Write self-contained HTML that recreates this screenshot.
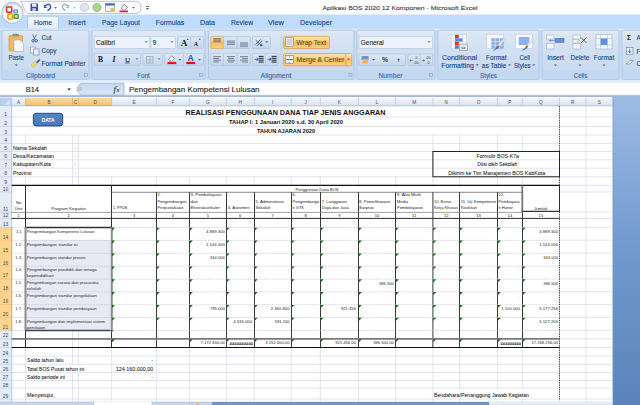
<!DOCTYPE html>
<html lang="id"><head><meta charset="utf-8"><title>Aplikasi BOS 2020 12 Komponen - Microsoft Excel</title>
<style>
html,body{margin:0;padding:0;background:#fff;overflow:hidden}
body{width:640px;height:405px;font-family:"Liberation Sans", sans-serif}
svg{display:block;font-family:"Liberation Sans", sans-serif}
text{white-space:pre}
</style></head><body>
<svg width="640" height="405" viewBox="0 0 640 405">
<defs>
<linearGradient id="gGroup" x1="0" y1="0" x2="0" y2="1"><stop offset="0" stop-color="#dfe9f6"/><stop offset="0.3" stop-color="#d3e1f3"/><stop offset="1" stop-color="#c6d9f0"/></linearGradient>
<linearGradient id="gTab" x1="0" y1="0" x2="0" y2="1"><stop offset="0" stop-color="#f2f7fd"/><stop offset="1" stop-color="#dfe9f6"/></linearGradient>
<linearGradient id="gOrange" x1="0" y1="0" x2="0" y2="1"><stop offset="0" stop-color="#fde4ad"/><stop offset="0.45" stop-color="#fdcf7c"/><stop offset="0.5" stop-color="#fbbd58"/><stop offset="1" stop-color="#fdd184"/></linearGradient>
<linearGradient id="gHdr" x1="0" y1="0" x2="0" y2="1"><stop offset="0" stop-color="#f4f7fc"/><stop offset="1" stop-color="#d9e3f1"/></linearGradient>
<linearGradient id="gHdrSel" x1="0" y1="0" x2="0" y2="1"><stop offset="0" stop-color="#f9dca4"/><stop offset="1" stop-color="#f4be6c"/></linearGradient>
<linearGradient id="gBlue" x1="0" y1="0" x2="0" y2="1"><stop offset="0" stop-color="#9dbbe4"/><stop offset="0.5" stop-color="#7099cf"/><stop offset="1" stop-color="#5a84bb"/></linearGradient>
<radialGradient id="gOrb" cx="0.5" cy="0.6" r="0.6"><stop offset="0" stop-color="#ffffff"/><stop offset="0.7" stop-color="#f4f6fa"/><stop offset="1" stop-color="#c3ccda"/></radialGradient>
<linearGradient id="gBtn" x1="0" y1="0" x2="0" y2="1"><stop offset="0" stop-color="#dce8f6"/><stop offset="1" stop-color="#c4d7ee"/></linearGradient>
<linearGradient id="gData" x1="0" y1="0" x2="0" y2="1"><stop offset="0" stop-color="#5585c2"/><stop offset="1" stop-color="#4878b6"/></linearGradient>
<linearGradient id="gPill" x1="0" y1="0" x2="0" y2="1"><stop offset="0" stop-color="#c3d6f0"/><stop offset="1" stop-color="#dde9f8"/></linearGradient>
</defs>
<rect x="0" y="0" width="640" height="14.5" fill="#ffffff" />
<rect x="0" y="14.5" width="640" height="14.5" fill="#bfdbff" />
<path d="M0 0 H22 Q24 8 28 14.5 H0 Z" fill="#ffffff"/>
<path d="M20.6 1.3 H135.5 Q141 1.3 141 7.4 Q141 13.5 135.5 13.5 H27.5 Q24.5 11.5 23.3 7 Q22.5 3 20.6 1.3 Z" fill="#f8fafd" stroke="#aeb6c6" stroke-width="0.8"/>
<text x="400" y="9.6" font-size="6.1" fill="#3b3b3b" text-anchor="middle" textLength="155" lengthAdjust="spacingAndGlyphs" stroke="#3b3b3b" stroke-width="0.1">Aplikasi BOS 2020 12 Komponen - Microsoft Excel</text>
<circle cx="12.5" cy="12.8" r="10.6" fill="url(#gOrb)" stroke="#9aa7ba" stroke-width="0.7"/>
<rect x="6.6" y="7" width="5.2" height="5.2" fill="#f7e9e2" stroke="#d9381e" stroke-width="1.5" rx="0.6" />
<rect x="14" y="10" width="3.4" height="3" fill="#e6eefb" stroke="#3f7ed8" stroke-width="1.1" rx="0.5" />
<rect x="7.9" y="14.1" width="4.6" height="4.8" fill="#fbf1dc" stroke="#f09a1a" stroke-width="1.5" rx="0.6" />
<rect x="14.2" y="14.6" width="4" height="3.6" fill="#e5f2dc" stroke="#4c9a2a" stroke-width="1.4" rx="0.5" />
<rect x="30.5" y="3.5" width="7.5" height="7.5" fill="#3a49b0" rx="0.6" />
<rect x="32" y="3.8" width="4.5" height="3" fill="#e8ecfa" />
<rect x="32.3" y="8.2" width="3.6" height="2.8" fill="#c5cbe9" />
<path d="M45 6 Q49 2.5 50.5 6 Q51 9 47.5 10.5" fill="none" stroke="#3c62c8" stroke-width="1.5"/><path d="M43.8 4.2 V8 H47.3 Z" fill="#3c62c8"/>
<path d="M54 7 h3 l-1.5 1.8 z" fill="#6b7686"/>
<path d="M68 6 Q64 2.5 62.5 6 Q62 9 65.5 10.5" fill="none" stroke="#a9b7d4" stroke-width="1.5"/><path d="M69.2 4.2 V8 H65.7 Z" fill="#a9b7d4"/>
<path d="M73 7 h3 l-1.5 1.8 z" fill="#b5bcc8"/>
<circle cx="84.5" cy="7.5" r="4.2" fill="#dfe3ea" stroke="#bcc3cf" stroke-width="0.6"/>
<circle cx="97" cy="7.5" r="4.2" fill="#a9d48c" stroke="#86b36b" stroke-width="0.6"/>
<rect x="105.5" y="3.5" width="9" height="8" fill="#eef2fa" stroke="#7c8fb5" stroke-width="0.6" />
<rect x="105.5" y="3.5" width="9" height="2" fill="#4a67b5" />
<rect x="110.5" y="8" width="4" height="3.5" fill="#e9c35a" />
<path d="M121 8.5 l3 -4.5 l3.5 3.5 l-3.2 2.8 z" fill="#eef1f6" stroke="#55617a" stroke-width="0.6"/>
<rect x="119.5" y="10.6" width="8.5" height="1.6" fill="#e0131b" />
<path d="M132 7 h3 l-1.5 1.8 z" fill="#6b7686"/>
<rect x="146" y="6.2" width="3" height="0.8" fill="#3d4f74" />
<path d="M146 8 h3 l-1.5 1.8 z" fill="#3d4f74"/>
<path d="M27.6 29.6 V18.5 Q27.6 16.2 30 16.2 H56.2 Q58.6 16.2 58.6 18.5 V29.6 Z" fill="url(#gTab)"/><path d="M27.6 29.3 V18.5 Q27.6 16.2 30 16.2 H56.2 Q58.6 16.2 58.6 18.5 V29.3" fill="none" stroke="#9fbbe0" stroke-width="0.7"/>
<text x="43" y="25.2" font-size="6.4" fill="#15428b" text-anchor="middle" textLength="18" lengthAdjust="spacingAndGlyphs" stroke="#15428b" stroke-width="0.1">Home</text>
<text x="77" y="25.2" font-size="6.4" fill="#15428b" text-anchor="middle" textLength="17.5" lengthAdjust="spacingAndGlyphs" stroke="#15428b" stroke-width="0.1">Insert</text>
<text x="121" y="25.2" font-size="6.4" fill="#15428b" text-anchor="middle" textLength="38" lengthAdjust="spacingAndGlyphs" stroke="#15428b" stroke-width="0.1">Page Layout</text>
<text x="170" y="25.2" font-size="6.4" fill="#15428b" text-anchor="middle" textLength="28.5" lengthAdjust="spacingAndGlyphs" stroke="#15428b" stroke-width="0.1">Formulas</text>
<text x="207.5" y="25.2" font-size="6.4" fill="#15428b" text-anchor="middle" textLength="15" lengthAdjust="spacingAndGlyphs" stroke="#15428b" stroke-width="0.1">Data</text>
<text x="242" y="25.2" font-size="6.4" fill="#15428b" text-anchor="middle" textLength="22" lengthAdjust="spacingAndGlyphs" stroke="#15428b" stroke-width="0.1">Review</text>
<text x="276" y="25.2" font-size="6.4" fill="#15428b" text-anchor="middle" textLength="16" lengthAdjust="spacingAndGlyphs" stroke="#15428b" stroke-width="0.1">View</text>
<text x="316" y="25.2" font-size="6.4" fill="#15428b" text-anchor="middle" textLength="32" lengthAdjust="spacingAndGlyphs" stroke="#15428b" stroke-width="0.1">Developer</text>
<rect x="0" y="29" width="640" height="52" fill="#c8dcf4" />
<rect x="0" y="28.6" width="640" height="1.6" fill="#dce8f7" />
<rect x="0" y="80.2" width="640" height="3" fill="#e4effb" />
<rect x="2" y="30.2" width="87" height="49.3" fill="url(#gGroup)" stroke="#a4bfe0" stroke-width="0.7" rx="1.8" />
<path d="M2.4 70.6 H88.6 V78 Q88.6 79.2 87.2 79.2 H3.8 Q2.4 79.2 2.4 78 Z" fill="#c1d8f0"/>
<rect x="92" y="30.2" width="113" height="49.3" fill="url(#gGroup)" stroke="#a4bfe0" stroke-width="0.7" rx="1.8" />
<path d="M92.4 70.6 H204.6 V78 Q204.6 79.2 203.2 79.2 H93.8 Q92.4 79.2 92.4 78 Z" fill="#c1d8f0"/>
<rect x="208.5" y="30.2" width="145.5" height="49.3" fill="url(#gGroup)" stroke="#a4bfe0" stroke-width="0.7" rx="1.8" />
<path d="M208.9 70.6 H353.6 V78 Q353.6 79.2 352.2 79.2 H210.3 Q208.9 79.2 208.9 78 Z" fill="#c1d8f0"/>
<rect x="357" y="30.2" width="78" height="49.3" fill="url(#gGroup)" stroke="#a4bfe0" stroke-width="0.7" rx="1.8" />
<path d="M357.4 70.6 H434.6 V78 Q434.6 79.2 433.2 79.2 H358.8 Q357.4 79.2 357.4 78 Z" fill="#c1d8f0"/>
<rect x="438" y="30.2" width="101" height="49.3" fill="url(#gGroup)" stroke="#a4bfe0" stroke-width="0.7" rx="1.8" />
<path d="M438.4 70.6 H538.6 V78 Q538.6 79.2 537.2 79.2 H439.8 Q438.4 79.2 438.4 78 Z" fill="#c1d8f0"/>
<rect x="542" y="30.2" width="77" height="49.3" fill="url(#gGroup)" stroke="#a4bfe0" stroke-width="0.7" rx="1.8" />
<path d="M542.4 70.6 H618.6 V78 Q618.6 79.2 617.2 79.2 H543.8 Q542.4 79.2 542.4 78 Z" fill="#c1d8f0"/>
<rect x="622" y="30.2" width="78" height="49.3" fill="url(#gGroup)" stroke="#a4bfe0" stroke-width="0.7" rx="1.8" />
<path d="M622.4 70.6 H699.6 V78 Q699.6 79.2 698.2 79.2 H623.8 Q622.4 79.2 622.4 78 Z" fill="#c1d8f0"/>
<text x="40.5" y="77.8" font-size="6.3" fill="#3a66a8" text-anchor="middle" textLength="29" lengthAdjust="spacingAndGlyphs" stroke="#3a66a8" stroke-width="0.1">Clipboard</text>
<text x="143.5" y="77.8" font-size="6.3" fill="#3a66a8" text-anchor="middle" textLength="12.5" lengthAdjust="spacingAndGlyphs" stroke="#3a66a8" stroke-width="0.1">Font</text>
<text x="276" y="77.8" font-size="6.3" fill="#3a66a8" text-anchor="middle" textLength="31" lengthAdjust="spacingAndGlyphs" stroke="#3a66a8" stroke-width="0.1">Alignment</text>
<text x="390.5" y="77.8" font-size="6.3" fill="#3a66a8" text-anchor="middle" textLength="24" lengthAdjust="spacingAndGlyphs" stroke="#3a66a8" stroke-width="0.1">Number</text>
<text x="488.5" y="77.8" font-size="6.3" fill="#3a66a8" text-anchor="middle" textLength="17" lengthAdjust="spacingAndGlyphs" stroke="#3a66a8" stroke-width="0.1">Styles</text>
<text x="580.5" y="77.8" font-size="6.3" fill="#3a66a8" text-anchor="middle" textLength="13.5" lengthAdjust="spacingAndGlyphs" stroke="#3a66a8" stroke-width="0.1">Cells</text>
<rect x="84.5" y="73.5" width="3" height="3" fill="none" stroke="#7f97bd" stroke-width="0.5" />
<rect x="199.5" y="73.5" width="3" height="3" fill="none" stroke="#7f97bd" stroke-width="0.5" />
<rect x="349" y="73.5" width="3" height="3" fill="none" stroke="#7f97bd" stroke-width="0.5" />
<rect x="429.5" y="73.5" width="3" height="3" fill="none" stroke="#7f97bd" stroke-width="0.5" />
<rect x="9" y="35.5" width="13.5" height="15.5" fill="#efb95c" stroke="#c89338" stroke-width="0.6" rx="1" />
<rect x="12.5" y="33.8" width="6.5" height="2.6" fill="#8c8f96" rx="0.8" />
<path d="M14 40 H20 L23.5 43.5 V51.5 H14 Z" fill="#f7f8fb" stroke="#9aa3b4" stroke-width="0.5"/>
<text x="16.2" y="60" font-size="6.3" fill="#15428b" text-anchor="middle" textLength="15.5" lengthAdjust="spacingAndGlyphs" stroke="#15428b" stroke-width="0.1">Paste</text>
<path d="M14.8 64.5 h3 l-1.5 1.7 z" fill="#49618c"/>
<path d="M32.5 34.5 L35.5 40 M36.5 34.5 L33.5 40" stroke="#55606f" stroke-width="0.8" fill="none"/><circle cx="33" cy="40.8" r="1.2" fill="none" stroke="#2d45b5" stroke-width="0.8"/><circle cx="36.2" cy="40.8" r="1.2" fill="none" stroke="#2d45b5" stroke-width="0.8"/>
<text x="41.5" y="40" font-size="6.3" fill="#15428b" textLength="10" lengthAdjust="spacingAndGlyphs" stroke="#15428b" stroke-width="0.1">Cut</text>
<rect x="30.5" y="47" width="5" height="6" fill="#f4f6fb" stroke="#6f7f9f" stroke-width="0.5" />
<rect x="33.5" y="49" width="5.5" height="6" fill="#e8eefb" stroke="#4d63a8" stroke-width="0.5" />
<text x="41.5" y="53" font-size="6.3" fill="#15428b" textLength="15" lengthAdjust="spacingAndGlyphs" stroke="#15428b" stroke-width="0.1">Copy</text>
<path d="M31 65 L35 61.5 L37 63.5 L33.5 67.5 Z" fill="#f0d870" stroke="#c7a93a" stroke-width="0.4"/><path d="M36 62 L39.5 59 L40.5 60 L37.5 63.5 Z" fill="#59508a"/>
<text x="41.5" y="66" font-size="6.3" fill="#15428b" textLength="44" lengthAdjust="spacingAndGlyphs" stroke="#15428b" stroke-width="0.1">Format Painter</text>
<rect x="94.4" y="36.7" width="55.4" height="11.6" fill="#ecf3fc" stroke="#b3c9e6" stroke-width="0.6" />
<text x="96" y="45" font-size="6.4" fill="#2a2a2a" textLength="19" lengthAdjust="spacingAndGlyphs" stroke="#2a2a2a" stroke-width="0.1">Calibri</text>
<path d="M144.7 41.2 h3 l-1.5 1.7 z" fill="#6a84b3"/>
<rect x="151" y="36.7" width="24.3" height="11.6" fill="#ecf3fc" stroke="#b3c9e6" stroke-width="0.6" />
<text x="152.8" y="45" font-size="6.4" fill="#2a2a2a" stroke="#2a2a2a" stroke-width="0.1">9</text>
<path d="M170.5 41.2 h3 l-1.5 1.7 z" fill="#6a84b3"/>
<rect x="177.6" y="36.7" width="25.8" height="11.6" fill="url(#gBtn)" stroke="#a9bfdc" stroke-width="0.6" rx="1" />
<line x1="190.6" y1="36.7" x2="190.6" y2="48.3" stroke="#a9bfdc" stroke-width="0.6" />
<text x="184" y="46.2" font-size="9.2" fill="#222" text-anchor="middle" font-weight="bold" font-family='"Liberation Serif", serif'>A</text>
<text x="195.8" y="46.2" font-size="6" fill="#222" text-anchor="middle" font-weight="bold" font-family='"Liberation Serif", serif'>A</text>
<path d="M186.6 40 l1.1 -1.4 l1.1 1.4 z" fill="#2b4ba5"/><path d="M198.6 38.8 l1.1 1.4 l1.1 -1.4 z" fill="#2b4ba5"/>
<rect x="94.4" y="53.6" width="46.2" height="11.7" fill="url(#gBtn)" stroke="#a9bfdc" stroke-width="0.6" rx="1" />
<text x="100.6" y="62" font-size="7.6" fill="#111" text-anchor="middle" font-weight="bold" font-family='"Liberation Serif", serif'>B</text>
<text x="114" y="62" font-size="7.6" fill="#111" text-anchor="middle" font-weight="bold" font-style="italic" font-family='"Liberation Serif", serif'>I</text>
<text x="127.5" y="61.6" font-size="7" fill="#111" text-anchor="middle" font-family='"Liberation Serif", serif' stroke="#111" stroke-width="0.1">U</text>
<line x1="125" y1="62.9" x2="130" y2="62.9" stroke="#111" stroke-width="0.6" />
<path d="M135.4 58.3 h3 l-1.5 1.7 z" fill="#6a84b3"/>
<rect x="142.8" y="53.6" width="19.4" height="11.7" fill="url(#gBtn)" stroke="#a9bfdc" stroke-width="0.6" rx="1" />
<rect x="146.5" y="56.5" width="6.5" height="6.5" fill="none" stroke="#8a98b3" stroke-width="0.6" />
<line x1="149.75" y1="56.5" x2="149.75" y2="63" stroke="#8a98b3" stroke-width="0.5" />
<line x1="146.5" y1="59.75" x2="153" y2="59.75" stroke="#8a98b3" stroke-width="0.5" />
<path d="M157.5 58.3 h3 l-1.5 1.7 z" fill="#6a84b3"/>
<rect x="164.7" y="53.6" width="38.8" height="11.7" fill="url(#gBtn)" stroke="#a9bfdc" stroke-width="0.6" rx="1" />
<line x1="183.5" y1="54" x2="183.5" y2="65.5" stroke="#a9bfdc" stroke-width="0.6" />
<path d="M168.5 59.5 l3 -3.8 l3 3 l-3 2.6 z" fill="#f3f5f9" stroke="#55617a" stroke-width="0.5"/>
<rect x="167.5" y="61.9" width="8.8" height="2.2" fill="#f01010" />
<path d="M178.5 59 h3 l-1.5 1.7 z" fill="#49618c"/>
<text x="190.8" y="61.3" font-size="8.2" fill="#2d4ea3" text-anchor="middle" font-weight="bold">A</text>
<rect x="186.3" y="61.9" width="8.8" height="2.2" fill="#f01010" />
<path d="M198 59 h3 l-1.5 1.7 z" fill="#49618c"/>
<rect x="210.9" y="36.6" width="39.3" height="11.8" fill="url(#gBtn)" stroke="#a9bfdc" stroke-width="0.6" rx="1" />
<rect x="210.9" y="36.6" width="12.3" height="11.8" fill="url(#gOrange)" stroke="#d9a24a" stroke-width="0.6" rx="1" />
<rect x="213.3" y="38" width="7.8" height="4.4" fill="#8c8064" />
<line x1="213.3" y1="39.4" x2="221.1" y2="39.4" stroke="#d9c79a" stroke-width="0.5" />
<line x1="213.3" y1="40.9" x2="221.1" y2="40.9" stroke="#d9c79a" stroke-width="0.5" />
<rect x="226.9" y="40.5" width="8" height="4.6" fill="#8a93a4" />
<line x1="226.9" y1="42" x2="234.9" y2="42" stroke="#c9d3e3" stroke-width="0.5" />
<line x1="226.9" y1="43.5" x2="234.9" y2="43.5" stroke="#c9d3e3" stroke-width="0.5" />
<rect x="240" y="42.3" width="8" height="4.6" fill="#8a93a4" />
<line x1="240" y1="43.8" x2="248" y2="43.8" stroke="#c9d3e3" stroke-width="0.5" />
<line x1="240" y1="45.3" x2="248" y2="45.3" stroke="#c9d3e3" stroke-width="0.5" />
<line x1="223.6" y1="36.6" x2="223.6" y2="48.4" stroke="#a9bfdc" stroke-width="0.6" />
<line x1="237" y1="36.6" x2="237" y2="48.4" stroke="#a9bfdc" stroke-width="0.6" />
<rect x="252.5" y="36.6" width="18" height="11.8" fill="url(#gBtn)" stroke="#a9bfdc" stroke-width="0.6" rx="1" />
<path d="M255.5 44.5 L260.5 39.5 M256.8 46 L262.3 40.6 M255.8 40.2 l6 5.8" stroke="#4b5568" stroke-width="0.9" fill="none"/><path d="M259.5 46.3 l3 -0.3 l-0.3 -2.7 z" fill="#4b5568"/>
<path d="M265.2 41.2 h3 l-1.5 1.7 z" fill="#4a6ab0"/>
<line x1="281.2" y1="34" x2="281.2" y2="67.5" stroke="#b4cbe8" stroke-width="0.7" />
<rect x="283.5" y="36.3" width="46" height="12.2" fill="url(#gOrange)" stroke="#d39a3f" stroke-width="0.7" rx="1.2" />
<rect x="285.6" y="37.8" width="7.8" height="8.4" fill="#f4f4f0" stroke="#6f7890" stroke-width="0.6" />
<line x1="286.4" y1="40" x2="292.6" y2="40" stroke="#7e8697" stroke-width="0.6" />
<line x1="286.4" y1="42" x2="292.6" y2="42" stroke="#7e8697" stroke-width="0.6" />
<line x1="286.4" y1="44" x2="292.6" y2="44" stroke="#7e8697" stroke-width="0.6" />
<text x="296.3" y="44.7" font-size="6.4" fill="#5f4f30" textLength="29.7" lengthAdjust="spacingAndGlyphs" stroke="#5f4f30" stroke-width="0.1">Wrap Text</text>
<rect x="210.9" y="53.6" width="39.3" height="11.8" fill="url(#gBtn)" stroke="#a9bfdc" stroke-width="0.6" rx="1" />
<line x1="223.6" y1="53.6" x2="223.6" y2="65.4" stroke="#a9bfdc" stroke-width="0.6" />
<line x1="237" y1="53.6" x2="237" y2="65.4" stroke="#a9bfdc" stroke-width="0.6" />
<line x1="213.3" y1="56.6" x2="221.1" y2="56.6" stroke="#7d8798" stroke-width="1.1" />
<line x1="213.3" y1="58.4" x2="218.9" y2="58.4" stroke="#7d8798" stroke-width="1.1" />
<line x1="213.3" y1="60.2" x2="221.1" y2="60.2" stroke="#7d8798" stroke-width="1.1" />
<line x1="213.3" y1="62" x2="218.9" y2="62" stroke="#7d8798" stroke-width="1.1" />
<line x1="226.9" y1="56.6" x2="234.9" y2="56.6" stroke="#7d8798" stroke-width="1.1" />
<line x1="228" y1="58.4" x2="233.8" y2="58.4" stroke="#7d8798" stroke-width="1.1" />
<line x1="226.9" y1="60.2" x2="234.9" y2="60.2" stroke="#7d8798" stroke-width="1.1" />
<line x1="228" y1="62" x2="233.8" y2="62" stroke="#7d8798" stroke-width="1.1" />
<line x1="240" y1="56.6" x2="248" y2="56.6" stroke="#7d8798" stroke-width="1.1" />
<line x1="242.2" y1="58.4" x2="248" y2="58.4" stroke="#7d8798" stroke-width="1.1" />
<line x1="240" y1="60.2" x2="248" y2="60.2" stroke="#7d8798" stroke-width="1.1" />
<line x1="242.2" y1="62" x2="248" y2="62" stroke="#7d8798" stroke-width="1.1" />
<rect x="252.5" y="53.6" width="25.7" height="11.8" fill="url(#gBtn)" stroke="#a9bfdc" stroke-width="0.6" rx="1" />
<line x1="265.3" y1="53.6" x2="265.3" y2="65.4" stroke="#a9bfdc" stroke-width="0.6" />
<line x1="258.6" y1="56.4" x2="263.6" y2="56.4" stroke="#2f3542" stroke-width="1.1" />
<line x1="258.6" y1="58.3" x2="263.6" y2="58.3" stroke="#2f3542" stroke-width="1.1" />
<line x1="258.6" y1="60.2" x2="263.6" y2="60.2" stroke="#2f3542" stroke-width="1.1" />
<line x1="258.6" y1="62.1" x2="263.6" y2="62.1" stroke="#2f3542" stroke-width="1.1" />
<path d="M254.6 59.3 h3.4 M256.6 57.8 l1.5 1.5 l-1.5 1.5" stroke="#2c54b0" stroke-width="0.9" fill="none"/>
<line x1="271.6" y1="56.4" x2="276.6" y2="56.4" stroke="#2f3542" stroke-width="1.1" />
<line x1="271.6" y1="58.3" x2="276.6" y2="58.3" stroke="#2f3542" stroke-width="1.1" />
<line x1="271.6" y1="60.2" x2="276.6" y2="60.2" stroke="#2f3542" stroke-width="1.1" />
<line x1="271.6" y1="62.1" x2="276.6" y2="62.1" stroke="#2f3542" stroke-width="1.1" />
<path d="M267.6 59.3 h3.4 M269.6 57.8 l1.5 1.5 l-1.5 1.5" stroke="#2c54b0" stroke-width="0.9" fill="none"/>
<rect x="283.5" y="53.5" width="68.3" height="12.2" fill="url(#gOrange)" stroke="#d39a3f" stroke-width="0.7" rx="1.2" />
<line x1="345.7" y1="53.5" x2="345.7" y2="65.7" stroke="#d39a3f" stroke-width="0.6" />
<rect x="285.6" y="55.3" width="8" height="8.4" fill="#eef1f6" stroke="#6f7890" stroke-width="0.6" />
<line x1="286.4" y1="59.5" x2="292.8" y2="59.5" stroke="#3b5fb5" stroke-width="0.9" />
<line x1="289.6" y1="55.3" x2="289.6" y2="57.5" stroke="#6f7890" stroke-width="0.5" />
<line x1="289.6" y1="61.5" x2="289.6" y2="63.7" stroke="#6f7890" stroke-width="0.5" />
<text x="296.5" y="61.9" font-size="6.4" fill="#5f4f30" textLength="47.7" lengthAdjust="spacingAndGlyphs" stroke="#5f4f30" stroke-width="0.1">Merge &amp; Center</text>
<path d="M347.2 58.5 h3 l-1.5 1.7 z" fill="#5a6fa0"/>
<rect x="359" y="36.7" width="73.5" height="11.6" fill="#ecf3fc" stroke="#b3c9e6" stroke-width="0.6" />
<text x="360.8" y="44.8" font-size="6.4" fill="#2a2a2a" textLength="23" lengthAdjust="spacingAndGlyphs" stroke="#2a2a2a" stroke-width="0.1">General</text>
<path d="M427.5 41.2 h3 l-1.5 1.7 z" fill="#6a84b3"/>
<rect x="359" y="54" width="46.5" height="11.5" fill="url(#gBtn)" stroke="#a9bfdc" stroke-width="0.6" rx="1" />
<rect x="361.5" y="56" width="7" height="4" fill="#6d92d0" />
<rect x="362.5" y="59" width="5.5" height="4.5" fill="#e6b84a" />
<path d="M372 59 h3 l-1.5 1.7 z" fill="#49618c"/>
<text x="385" y="62.3" font-size="6.8" fill="#333" text-anchor="middle" font-weight="bold">%</text>
<text x="398.5" y="60.3" font-size="8.5" fill="#222" text-anchor="middle" font-weight="bold">,</text>
<rect x="408" y="54" width="24.5" height="11.5" fill="url(#gBtn)" stroke="#a9bfdc" stroke-width="0.6" rx="1" />
<line x1="420.2" y1="54" x2="420.2" y2="65.5" stroke="#a9bfdc" stroke-width="0.6" />
<text x="416" y="59.2" font-size="3.6" fill="#333" text-anchor="middle">.0</text>
<text x="416" y="63.6" font-size="3.6" fill="#333" text-anchor="middle">.00</text>
<text x="428" y="59.2" font-size="3.6" fill="#333" text-anchor="middle">.00</text>
<text x="428" y="63.6" font-size="3.6" fill="#333" text-anchor="middle">.0</text>
<path d="M409.8 60.5 h2.8 M409.8 60.5 l1.2 -1 M409.8 60.5 l1.2 1" stroke="#2c54b0" stroke-width="0.6" fill="none"/>
<path d="M421.8 60.5 h2.8 M424.6 60.5 l-1.2 -1 M424.6 60.5 l-1.2 1" stroke="#2c54b0" stroke-width="0.6" fill="none"/>
<rect x="451.2" y="34.7" width="15" height="14" fill="#fbfcfe" stroke="#b9c6dc" stroke-width="0.5" />
<line x1="454.95" y1="34.7" x2="454.95" y2="48.7" stroke="#c3cee0" stroke-width="0.5" />
<line x1="451.2" y1="38.2" x2="466.2" y2="38.2" stroke="#c3cee0" stroke-width="0.5" />
<line x1="458.7" y1="34.7" x2="458.7" y2="48.7" stroke="#c3cee0" stroke-width="0.5" />
<line x1="451.2" y1="41.7" x2="466.2" y2="41.7" stroke="#c3cee0" stroke-width="0.5" />
<line x1="462.45" y1="34.7" x2="462.45" y2="48.7" stroke="#c3cee0" stroke-width="0.5" />
<line x1="451.2" y1="45.2" x2="466.2" y2="45.2" stroke="#c3cee0" stroke-width="0.5" />
<rect x="455" y="34.9" width="3.7" height="3.3" fill="#e8301a" />
<rect x="455" y="38.4" width="7.4" height="3.2" fill="#5588dd" />
<rect x="455" y="41.9" width="3.7" height="3.3" fill="#e8301a" />
<rect x="455" y="45.4" width="3.7" height="3.2" fill="#4b7fd6" />
<rect x="459.6" y="44" width="8" height="6.4" fill="#dfe4ec" stroke="#7a8598" stroke-width="0.5" />
<text x="463.6" y="49" font-size="3.6" fill="#333" text-anchor="middle">≤≠</text>
<text x="459.5" y="60" font-size="6.3" fill="#15428b" text-anchor="middle" textLength="35" lengthAdjust="spacingAndGlyphs" stroke="#15428b" stroke-width="0.1">Conditional</text>
<text x="457.5" y="67.6" font-size="6.3" fill="#15428b" text-anchor="middle" textLength="32.5" lengthAdjust="spacingAndGlyphs" stroke="#15428b" stroke-width="0.1">Formatting</text>
<path d="M475.7 64.2 h3 l-1.5 1.7 z" fill="#49618c"/>
<rect x="486.9" y="34.4" width="16.8" height="14.3" fill="#fbfcfe" stroke="#b3c2dc" stroke-width="0.5" />
<rect x="491.1" y="38" width="12.6" height="10.7" fill="#8fb0ea" />
<line x1="491.1" y1="34.4" x2="491.1" y2="48.7" stroke="#e8eef8" stroke-width="0.6" />
<line x1="486.9" y1="38" x2="503.7" y2="38" stroke="#e8eef8" stroke-width="0.6" />
<line x1="495.3" y1="34.4" x2="495.3" y2="48.7" stroke="#e8eef8" stroke-width="0.6" />
<line x1="486.9" y1="41.6" x2="503.7" y2="41.6" stroke="#e8eef8" stroke-width="0.6" />
<line x1="499.5" y1="34.4" x2="499.5" y2="48.7" stroke="#e8eef8" stroke-width="0.6" />
<line x1="486.9" y1="45.2" x2="503.7" y2="45.2" stroke="#e8eef8" stroke-width="0.6" />
<path d="M503.5 38.5 L505 39.6 L499.5 46.5 L497.8 45.3 Z" fill="#e6e8ee" stroke="#9aa2b2" stroke-width="0.3"/><path d="M497.8 45.3 L499.5 46.5 L498 48.3 L496.3 47.2 Z" fill="#9a6a2a"/><path d="M496.3 47.2 L498 48.3 L493 51.3 Z" fill="#3f6fc8"/>
<text x="496.2" y="60" font-size="6.3" fill="#15428b" text-anchor="middle" textLength="20.5" lengthAdjust="spacingAndGlyphs" stroke="#15428b" stroke-width="0.1">Format</text>
<text x="494" y="67.6" font-size="6.3" fill="#15428b" text-anchor="middle" textLength="24.4" lengthAdjust="spacingAndGlyphs" stroke="#15428b" stroke-width="0.1">as Table</text>
<path d="M508 64.2 h3 l-1.5 1.7 z" fill="#49618c"/>
<rect x="515.6" y="34.4" width="16.9" height="14.3" fill="#fbfcfe" stroke="#b3c2dc" stroke-width="0.5" />
<rect x="518.7" y="36.9" width="10.7" height="8.2" fill="#8fb0ea" />
<path d="M532.3 38.5 L533.8 39.6 L528.3 46.5 L526.6 45.3 Z" fill="#e6e8ee" stroke="#9aa2b2" stroke-width="0.3"/><path d="M526.6 45.3 L528.3 46.5 L526.8 48.3 L525.1 47.2 Z" fill="#9a6a2a"/><path d="M525.1 47.2 L526.8 48.3 L521.8 51.3 Z" fill="#3f6fc8"/>
<text x="524.7" y="60" font-size="6.3" fill="#15428b" text-anchor="middle" textLength="10.6" lengthAdjust="spacingAndGlyphs" stroke="#15428b" stroke-width="0.1">Cell</text>
<text x="522.3" y="67.6" font-size="6.3" fill="#15428b" text-anchor="middle" textLength="16.6" lengthAdjust="spacingAndGlyphs" stroke="#15428b" stroke-width="0.1">Styles</text>
<path d="M532.3 64.2 h3 l-1.5 1.7 z" fill="#49618c"/>
<rect x="546.5" y="35" width="7.5" height="4" fill="#f3f6fb" stroke="#8fa3c5" stroke-width="0.5" />
<rect x="546.5" y="43.5" width="7.5" height="5.5" fill="#f3f6fb" stroke="#8fa3c5" stroke-width="0.5" />
<rect x="555" y="38.3" width="9" height="4.2" fill="#5f8fe0" stroke="#3d68b5" stroke-width="0.5" />
<path d="M549.5 40.5 h5 M549.5 40.5 l1.3 -1 M549.5 40.5 l1.3 1" stroke="#3d68b5" stroke-width="0.6" fill="none"/>
<text x="555.5" y="60" font-size="6.3" fill="#15428b" text-anchor="middle" textLength="16.5" lengthAdjust="spacingAndGlyphs" stroke="#15428b" stroke-width="0.1">Insert</text>
<path d="M554 64.5 h3 l-1.5 1.7 z" fill="#49618c"/>
<rect x="573" y="35" width="7.5" height="4" fill="#f3f6fb" stroke="#8fa3c5" stroke-width="0.5" />
<rect x="573" y="43.5" width="7.5" height="5.5" fill="#f3f6fb" stroke="#8fa3c5" stroke-width="0.5" />
<rect x="573" y="39.2" width="5" height="3.8" fill="#f3f6fb" stroke="#8fa3c5" stroke-width="0.5" />
<path d="M581 37.5 l5.5 5.5 M586.5 37.5 l-5.5 5.5" stroke="#e0301e" stroke-width="1" fill="none"/>
<text x="580" y="60" font-size="6.3" fill="#15428b" text-anchor="middle" textLength="19" lengthAdjust="spacingAndGlyphs" stroke="#15428b" stroke-width="0.1">Delete</text>
<path d="M578.5 64.5 h3 l-1.5 1.7 z" fill="#49618c"/>
<rect x="596" y="34.5" width="16" height="14.5" fill="#f3f6fb" stroke="#8fa3c5" stroke-width="0.5" />
<rect x="600.5" y="38.5" width="7" height="6.5" fill="#5f8fe0" />
<line x1="600.5" y1="34.5" x2="600.5" y2="49" stroke="#9fb4d6" stroke-width="0.5" />
<line x1="607.5" y1="34.5" x2="607.5" y2="49" stroke="#9fb4d6" stroke-width="0.5" />
<line x1="596" y1="38.5" x2="612" y2="38.5" stroke="#9fb4d6" stroke-width="0.5" />
<line x1="596" y1="45" x2="612" y2="45" stroke="#9fb4d6" stroke-width="0.5" />
<text x="604" y="60" font-size="6.3" fill="#15428b" text-anchor="middle" textLength="20.5" lengthAdjust="spacingAndGlyphs" stroke="#15428b" stroke-width="0.1">Format</text>
<path d="M602.5 64.5 h3 l-1.5 1.7 z" fill="#49618c"/>
<text x="629" y="39.8" font-size="6.5" fill="#222" text-anchor="middle" font-weight="bold">Σ</text>
<text x="636.5" y="40" font-size="6.3" fill="#15428b" stroke="#15428b" stroke-width="0.1">AutoSum</text>
<rect x="626.5" y="47.5" width="6.5" height="7" fill="#e8eefb" stroke="#4d63a8" stroke-width="0.5" />
<path d="M629.7 49 v3.5 M628.3 51.3 l1.4 1.6 l1.4 -1.6" stroke="#2c54b0" stroke-width="0.8" fill="none"/>
<text x="636.5" y="53.5" font-size="6.3" fill="#15428b" stroke="#15428b" stroke-width="0.1">Fill</text>
<path d="M626.5 64 l3.5 -3.5 h3.5 l-3.5 3.5 z" fill="#f7f7fa" stroke="#555f70" stroke-width="0.5"/>
<text x="636.5" y="66" font-size="6.3" fill="#15428b" stroke="#15428b" stroke-width="0.1">Clear</text>
<rect x="0" y="83.2" width="640" height="12" fill="#ffffff" />
<rect x="0" y="95" width="640" height="2.7" fill="#9fb8dc" />
<line x1="0" y1="95.1" x2="640" y2="95.1" stroke="#c9daf0" stroke-width="0.6" />
<text x="32.3" y="92" font-size="6.4" fill="#222" text-anchor="middle" textLength="13.2" lengthAdjust="spacingAndGlyphs" stroke="#222" stroke-width="0.1">B14</text>
<path d="M67.3 88.6 h3.6 l-1.8 2 z" fill="#222"/>
<path d="M81 83.3 Q72.5 89 81 95 H123.8 V83.3 Z" fill="url(#gPill)" stroke="#8ea9d3" stroke-width="0.6"/>
<circle cx="80.2" cy="89" r="1.9" fill="#c3c9d3" stroke="#a8b0bf" stroke-width="0.4"/>
<text x="113.6" y="91.6" font-size="9" fill="#2a2a2a" font-style="italic" font-family='"Liberation Serif", serif' stroke="#2a2a2a" stroke-width="0.1">f</text>
<text x="116.6" y="92.3" font-size="5.6" fill="#2a2a2a" font-weight="bold" font-style="italic" font-family='"Liberation Serif", serif'>x</text>
<line x1="124.2" y1="83.3" x2="124.2" y2="95" stroke="#b3c7e3" stroke-width="0.6" />
<text x="129" y="92" font-size="7" fill="#222" textLength="130.5" lengthAdjust="spacingAndGlyphs" stroke="#222" stroke-width="0.1">Pengembangan Kompetensi Lulusan</text>
<rect x="0" y="97" width="612.4" height="308" fill="#ffffff" />
<rect x="612.4" y="97" width="27.6" height="308" fill="url(#gBlue)" />
<rect x="612.4" y="97" width="1.2" height="308" fill="#6f8fbf" opacity="0.55"/>
<rect x="0" y="97.6" width="612.4" height="8.4" fill="url(#gHdr)" />
<rect x="25.5" y="97.6" width="86.2" height="8.4" fill="url(#gHdrSel)" />
<line x1="0" y1="105.8" x2="612.4" y2="105.8" stroke="#9eb6ce" stroke-width="0.7" />
<line x1="25.5" y1="105.5" x2="111.7" y2="105.5" stroke="#f0a23c" stroke-width="0.9" />
<line x1="11.7" y1="97.5" x2="11.7" y2="106" stroke="#b4c5da" stroke-width="0.6" />
<text x="18.6" y="103.9" font-size="4.7" fill="#4a4f5c" text-anchor="middle">A</text>
<line x1="25.5" y1="97.5" x2="25.5" y2="106" stroke="#e0a656" stroke-width="0.6" />
<text x="49" y="103.9" font-size="4.7" fill="#4a4f5c" text-anchor="middle">B</text>
<line x1="72.5" y1="97.5" x2="72.5" y2="106" stroke="#e0a656" stroke-width="0.6" />
<text x="75.5" y="103.9" font-size="4.7" fill="#4a4f5c" text-anchor="middle">C</text>
<line x1="78.5" y1="97.5" x2="78.5" y2="106" stroke="#e0a656" stroke-width="0.6" />
<text x="95.1" y="103.9" font-size="4.7" fill="#4a4f5c" text-anchor="middle">D</text>
<line x1="111.7" y1="97.5" x2="111.7" y2="106" stroke="#e0a656" stroke-width="0.6" />
<text x="134.05" y="103.9" font-size="4.7" fill="#4a4f5c" text-anchor="middle">E</text>
<line x1="156.4" y1="97.5" x2="156.4" y2="106" stroke="#b4c5da" stroke-width="0.6" />
<text x="172.95" y="103.9" font-size="4.7" fill="#4a4f5c" text-anchor="middle">F</text>
<line x1="189.5" y1="97.5" x2="189.5" y2="106" stroke="#b4c5da" stroke-width="0.6" />
<text x="207.85" y="103.9" font-size="4.7" fill="#4a4f5c" text-anchor="middle">G</text>
<line x1="226.2" y1="97.5" x2="226.2" y2="106" stroke="#b4c5da" stroke-width="0.6" />
<text x="240.25" y="103.9" font-size="4.7" fill="#4a4f5c" text-anchor="middle">H</text>
<line x1="254.3" y1="97.5" x2="254.3" y2="106" stroke="#b4c5da" stroke-width="0.6" />
<text x="272.75" y="103.9" font-size="4.7" fill="#4a4f5c" text-anchor="middle">I</text>
<line x1="291.2" y1="97.5" x2="291.2" y2="106" stroke="#b4c5da" stroke-width="0.6" />
<text x="305.75" y="103.9" font-size="4.7" fill="#4a4f5c" text-anchor="middle">J</text>
<line x1="320.3" y1="97.5" x2="320.3" y2="106" stroke="#b4c5da" stroke-width="0.6" />
<text x="339.4" y="103.9" font-size="4.7" fill="#4a4f5c" text-anchor="middle">K</text>
<line x1="358.5" y1="97.5" x2="358.5" y2="106" stroke="#b4c5da" stroke-width="0.6" />
<text x="377" y="103.9" font-size="4.7" fill="#4a4f5c" text-anchor="middle">L</text>
<line x1="395.5" y1="97.5" x2="395.5" y2="106" stroke="#b4c5da" stroke-width="0.6" />
<text x="414.2" y="103.9" font-size="4.7" fill="#4a4f5c" text-anchor="middle">M</text>
<line x1="432.9" y1="97.5" x2="432.9" y2="106" stroke="#b4c5da" stroke-width="0.6" />
<text x="446.2" y="103.9" font-size="4.7" fill="#4a4f5c" text-anchor="middle">N</text>
<line x1="459.5" y1="97.5" x2="459.5" y2="106" stroke="#b4c5da" stroke-width="0.6" />
<text x="478.5" y="103.9" font-size="4.7" fill="#4a4f5c" text-anchor="middle">O</text>
<line x1="497.5" y1="97.5" x2="497.5" y2="106" stroke="#b4c5da" stroke-width="0.6" />
<text x="509.9" y="103.9" font-size="4.7" fill="#4a4f5c" text-anchor="middle">P</text>
<line x1="522.3" y1="97.5" x2="522.3" y2="106" stroke="#b4c5da" stroke-width="0.6" />
<text x="540.9" y="103.9" font-size="4.7" fill="#4a4f5c" text-anchor="middle">Q</text>
<line x1="559.5" y1="97.5" x2="559.5" y2="106" stroke="#b4c5da" stroke-width="0.6" />
<text x="572.75" y="103.9" font-size="4.7" fill="#4a4f5c" text-anchor="middle">R</text>
<line x1="586" y1="97.5" x2="586" y2="106" stroke="#b4c5da" stroke-width="0.6" />
<text x="599.2" y="103.9" font-size="4.7" fill="#4a4f5c" text-anchor="middle">S</text>
<line x1="612.4" y1="97" x2="612.4" y2="106" stroke="#b4c5da" stroke-width="0.6" />
<rect x="0" y="97.6" width="11.7" height="8.2" fill="#b7ceed" />
<path d="M9.8 99.3 V104.6 H4.5 Z" fill="#dbe7f6"/>
<rect x="0" y="106" width="11.7" height="299" fill="#e4ecf7" />
<rect x="0" y="227.3" width="11.7" height="103" fill="#ffd58e" />
<line x1="11.7" y1="106" x2="11.7" y2="405" stroke="#9eb6ce" stroke-width="0.7" />
<line x1="11.7" y1="227.3" x2="11.7" y2="330.3" stroke="#e0a656" stroke-width="0.8" />
<line x1="0" y1="117" x2="11.7" y2="117" stroke="#b4c5da" stroke-width="0.5" />
<text x="5.6" y="115.5" font-size="5" fill="#3f4a63" text-anchor="middle">1</text>
<line x1="0" y1="126.5" x2="11.7" y2="126.5" stroke="#b4c5da" stroke-width="0.5" />
<text x="5.6" y="125" font-size="5" fill="#3f4a63" text-anchor="middle">2</text>
<line x1="0" y1="135" x2="11.7" y2="135" stroke="#b4c5da" stroke-width="0.5" />
<text x="5.6" y="133.5" font-size="5" fill="#3f4a63" text-anchor="middle">3</text>
<line x1="0" y1="143.5" x2="11.7" y2="143.5" stroke="#b4c5da" stroke-width="0.5" />
<text x="5.6" y="142" font-size="5" fill="#3f4a63" text-anchor="middle">4</text>
<line x1="0" y1="151.5" x2="11.7" y2="151.5" stroke="#b4c5da" stroke-width="0.5" />
<text x="5.6" y="150" font-size="5" fill="#3f4a63" text-anchor="middle">5</text>
<line x1="0" y1="159.8" x2="11.7" y2="159.8" stroke="#b4c5da" stroke-width="0.5" />
<text x="5.6" y="158.3" font-size="5" fill="#3f4a63" text-anchor="middle">6</text>
<line x1="0" y1="168.2" x2="11.7" y2="168.2" stroke="#b4c5da" stroke-width="0.5" />
<text x="5.6" y="166.7" font-size="5" fill="#3f4a63" text-anchor="middle">7</text>
<line x1="0" y1="176.8" x2="11.7" y2="176.8" stroke="#b4c5da" stroke-width="0.5" />
<text x="5.6" y="175.3" font-size="5" fill="#3f4a63" text-anchor="middle">8</text>
<line x1="0" y1="185.3" x2="11.7" y2="185.3" stroke="#b4c5da" stroke-width="0.5" />
<text x="5.6" y="183.8" font-size="5" fill="#3f4a63" text-anchor="middle">9</text>
<line x1="0" y1="192" x2="11.7" y2="192" stroke="#b4c5da" stroke-width="0.5" />
<text x="5.6" y="190.5" font-size="5" fill="#3f4a63" text-anchor="middle">10</text>
<line x1="0" y1="212.2" x2="11.7" y2="212.2" stroke="#b4c5da" stroke-width="0.5" />
<text x="5.6" y="210.7" font-size="5" fill="#3f4a63" text-anchor="middle">11</text>
<line x1="0" y1="218.5" x2="11.7" y2="218.5" stroke="#b4c5da" stroke-width="0.5" />
<text x="5.6" y="217" font-size="5" fill="#3f4a63" text-anchor="middle">12</text>
<line x1="0" y1="227.3" x2="11.7" y2="227.3" stroke="#b4c5da" stroke-width="0.5" />
<text x="5.6" y="225.8" font-size="5" fill="#3f4a63" text-anchor="middle">13</text>
<line x1="0" y1="240.2" x2="11.7" y2="240.2" stroke="#e3b66f" stroke-width="0.5" />
<text x="5.6" y="238.7" font-size="5" fill="#3f4a63" text-anchor="middle">14</text>
<line x1="0" y1="253.1" x2="11.7" y2="253.1" stroke="#e3b66f" stroke-width="0.5" />
<text x="5.6" y="251.6" font-size="5" fill="#3f4a63" text-anchor="middle">15</text>
<line x1="0" y1="266" x2="11.7" y2="266" stroke="#e3b66f" stroke-width="0.5" />
<text x="5.6" y="264.5" font-size="5" fill="#3f4a63" text-anchor="middle">16</text>
<line x1="0" y1="278.9" x2="11.7" y2="278.9" stroke="#e3b66f" stroke-width="0.5" />
<text x="5.6" y="277.4" font-size="5" fill="#3f4a63" text-anchor="middle">17</text>
<line x1="0" y1="291.7" x2="11.7" y2="291.7" stroke="#e3b66f" stroke-width="0.5" />
<text x="5.6" y="290.2" font-size="5" fill="#3f4a63" text-anchor="middle">18</text>
<line x1="0" y1="304.5" x2="11.7" y2="304.5" stroke="#e3b66f" stroke-width="0.5" />
<text x="5.6" y="303" font-size="5" fill="#3f4a63" text-anchor="middle">19</text>
<line x1="0" y1="317.3" x2="11.7" y2="317.3" stroke="#e3b66f" stroke-width="0.5" />
<text x="5.6" y="315.8" font-size="5" fill="#3f4a63" text-anchor="middle">20</text>
<line x1="0" y1="330.3" x2="11.7" y2="330.3" stroke="#e3b66f" stroke-width="0.5" />
<text x="5.6" y="328.8" font-size="5" fill="#3f4a63" text-anchor="middle">21</text>
<line x1="0" y1="338.8" x2="11.7" y2="338.8" stroke="#b4c5da" stroke-width="0.5" />
<text x="5.6" y="337.3" font-size="5" fill="#3f4a63" text-anchor="middle">22</text>
<line x1="0" y1="347.5" x2="11.7" y2="347.5" stroke="#b4c5da" stroke-width="0.5" />
<text x="5.6" y="346" font-size="5" fill="#3f4a63" text-anchor="middle">23</text>
<line x1="0" y1="356" x2="11.7" y2="356" stroke="#b4c5da" stroke-width="0.5" />
<text x="5.6" y="354.5" font-size="5" fill="#3f4a63" text-anchor="middle">24</text>
<line x1="0" y1="364.3" x2="11.7" y2="364.3" stroke="#b4c5da" stroke-width="0.5" />
<text x="5.6" y="362.8" font-size="5" fill="#3f4a63" text-anchor="middle">25</text>
<line x1="0" y1="372.5" x2="11.7" y2="372.5" stroke="#b4c5da" stroke-width="0.5" />
<text x="5.6" y="371" font-size="5" fill="#3f4a63" text-anchor="middle">26</text>
<line x1="0" y1="380.5" x2="11.7" y2="380.5" stroke="#b4c5da" stroke-width="0.5" />
<text x="5.6" y="379" font-size="5" fill="#3f4a63" text-anchor="middle">27</text>
<line x1="0" y1="388.2" x2="11.7" y2="388.2" stroke="#b4c5da" stroke-width="0.5" />
<text x="5.6" y="386.7" font-size="5" fill="#3f4a63" text-anchor="middle">28</text>
<line x1="0" y1="399" x2="11.7" y2="399" stroke="#b4c5da" stroke-width="0.5" />
<text x="5.6" y="397.5" font-size="5" fill="#3f4a63" text-anchor="middle">29</text>
<line x1="559.5" y1="105.8" x2="559.5" y2="117" stroke="#d7ddeb" stroke-width="0.8" />
<line x1="586" y1="105.8" x2="586" y2="117" stroke="#d7ddeb" stroke-width="0.8" />
<line x1="612.4" y1="105.8" x2="612.4" y2="117" stroke="#d7ddeb" stroke-width="0.8" />
<line x1="559.5" y1="117" x2="559.5" y2="126.5" stroke="#d7ddeb" stroke-width="0.8" />
<line x1="586" y1="117" x2="586" y2="126.5" stroke="#d7ddeb" stroke-width="0.8" />
<line x1="612.4" y1="117" x2="612.4" y2="126.5" stroke="#d7ddeb" stroke-width="0.8" />
<line x1="559.5" y1="126.5" x2="559.5" y2="135" stroke="#d7ddeb" stroke-width="0.8" />
<line x1="586" y1="126.5" x2="586" y2="135" stroke="#d7ddeb" stroke-width="0.8" />
<line x1="612.4" y1="126.5" x2="612.4" y2="135" stroke="#d7ddeb" stroke-width="0.8" />
<line x1="25.5" y1="135" x2="25.5" y2="143.5" stroke="#d7ddeb" stroke-width="0.8" />
<line x1="72.5" y1="135" x2="72.5" y2="143.5" stroke="#d7ddeb" stroke-width="0.8" />
<line x1="78.5" y1="135" x2="78.5" y2="143.5" stroke="#d7ddeb" stroke-width="0.8" />
<line x1="432.9" y1="135" x2="432.9" y2="143.5" stroke="#d7ddeb" stroke-width="0.8" />
<line x1="459.5" y1="135" x2="459.5" y2="143.5" stroke="#d7ddeb" stroke-width="0.8" />
<line x1="497.5" y1="135" x2="497.5" y2="143.5" stroke="#d7ddeb" stroke-width="0.8" />
<line x1="522.3" y1="135" x2="522.3" y2="143.5" stroke="#d7ddeb" stroke-width="0.8" />
<line x1="559.5" y1="135" x2="559.5" y2="143.5" stroke="#d7ddeb" stroke-width="0.8" />
<line x1="586" y1="135" x2="586" y2="143.5" stroke="#d7ddeb" stroke-width="0.8" />
<line x1="612.4" y1="135" x2="612.4" y2="143.5" stroke="#d7ddeb" stroke-width="0.8" />
<line x1="72.5" y1="143.5" x2="72.5" y2="151.5" stroke="#d7ddeb" stroke-width="0.8" />
<line x1="78.5" y1="143.5" x2="78.5" y2="151.5" stroke="#d7ddeb" stroke-width="0.8" />
<line x1="432.9" y1="143.5" x2="432.9" y2="151.5" stroke="#d7ddeb" stroke-width="0.8" />
<line x1="459.5" y1="143.5" x2="459.5" y2="151.5" stroke="#d7ddeb" stroke-width="0.8" />
<line x1="497.5" y1="143.5" x2="497.5" y2="151.5" stroke="#d7ddeb" stroke-width="0.8" />
<line x1="522.3" y1="143.5" x2="522.3" y2="151.5" stroke="#d7ddeb" stroke-width="0.8" />
<line x1="559.5" y1="143.5" x2="559.5" y2="151.5" stroke="#d7ddeb" stroke-width="0.8" />
<line x1="586" y1="143.5" x2="586" y2="151.5" stroke="#d7ddeb" stroke-width="0.8" />
<line x1="612.4" y1="143.5" x2="612.4" y2="151.5" stroke="#d7ddeb" stroke-width="0.8" />
<line x1="72.5" y1="151.5" x2="72.5" y2="159.8" stroke="#d7ddeb" stroke-width="0.8" />
<line x1="78.5" y1="151.5" x2="78.5" y2="159.8" stroke="#d7ddeb" stroke-width="0.8" />
<line x1="432.9" y1="151.5" x2="432.9" y2="159.8" stroke="#d7ddeb" stroke-width="0.8" />
<line x1="559.5" y1="151.5" x2="559.5" y2="159.8" stroke="#d7ddeb" stroke-width="0.8" />
<line x1="586" y1="151.5" x2="586" y2="159.8" stroke="#d7ddeb" stroke-width="0.8" />
<line x1="612.4" y1="151.5" x2="612.4" y2="159.8" stroke="#d7ddeb" stroke-width="0.8" />
<line x1="72.5" y1="159.8" x2="72.5" y2="168.2" stroke="#d7ddeb" stroke-width="0.8" />
<line x1="78.5" y1="159.8" x2="78.5" y2="168.2" stroke="#d7ddeb" stroke-width="0.8" />
<line x1="432.9" y1="159.8" x2="432.9" y2="168.2" stroke="#d7ddeb" stroke-width="0.8" />
<line x1="559.5" y1="159.8" x2="559.5" y2="168.2" stroke="#d7ddeb" stroke-width="0.8" />
<line x1="586" y1="159.8" x2="586" y2="168.2" stroke="#d7ddeb" stroke-width="0.8" />
<line x1="612.4" y1="159.8" x2="612.4" y2="168.2" stroke="#d7ddeb" stroke-width="0.8" />
<line x1="72.5" y1="168.2" x2="72.5" y2="176.8" stroke="#d7ddeb" stroke-width="0.8" />
<line x1="78.5" y1="168.2" x2="78.5" y2="176.8" stroke="#d7ddeb" stroke-width="0.8" />
<line x1="432.9" y1="168.2" x2="432.9" y2="176.8" stroke="#d7ddeb" stroke-width="0.8" />
<line x1="559.5" y1="168.2" x2="559.5" y2="176.8" stroke="#d7ddeb" stroke-width="0.8" />
<line x1="586" y1="168.2" x2="586" y2="176.8" stroke="#d7ddeb" stroke-width="0.8" />
<line x1="612.4" y1="168.2" x2="612.4" y2="176.8" stroke="#d7ddeb" stroke-width="0.8" />
<line x1="25.5" y1="176.8" x2="25.5" y2="185.3" stroke="#d7ddeb" stroke-width="0.8" />
<line x1="72.5" y1="176.8" x2="72.5" y2="185.3" stroke="#d7ddeb" stroke-width="0.8" />
<line x1="78.5" y1="176.8" x2="78.5" y2="185.3" stroke="#d7ddeb" stroke-width="0.8" />
<line x1="111.7" y1="176.8" x2="111.7" y2="185.3" stroke="#d7ddeb" stroke-width="0.8" />
<line x1="156.4" y1="176.8" x2="156.4" y2="185.3" stroke="#d7ddeb" stroke-width="0.8" />
<line x1="189.5" y1="176.8" x2="189.5" y2="185.3" stroke="#d7ddeb" stroke-width="0.8" />
<line x1="226.2" y1="176.8" x2="226.2" y2="185.3" stroke="#d7ddeb" stroke-width="0.8" />
<line x1="254.3" y1="176.8" x2="254.3" y2="185.3" stroke="#d7ddeb" stroke-width="0.8" />
<line x1="291.2" y1="176.8" x2="291.2" y2="185.3" stroke="#d7ddeb" stroke-width="0.8" />
<line x1="320.3" y1="176.8" x2="320.3" y2="185.3" stroke="#d7ddeb" stroke-width="0.8" />
<line x1="358.5" y1="176.8" x2="358.5" y2="185.3" stroke="#d7ddeb" stroke-width="0.8" />
<line x1="395.5" y1="176.8" x2="395.5" y2="185.3" stroke="#d7ddeb" stroke-width="0.8" />
<line x1="432.9" y1="176.8" x2="432.9" y2="185.3" stroke="#d7ddeb" stroke-width="0.8" />
<line x1="459.5" y1="176.8" x2="459.5" y2="185.3" stroke="#d7ddeb" stroke-width="0.8" />
<line x1="497.5" y1="176.8" x2="497.5" y2="185.3" stroke="#d7ddeb" stroke-width="0.8" />
<line x1="522.3" y1="176.8" x2="522.3" y2="185.3" stroke="#d7ddeb" stroke-width="0.8" />
<line x1="559.5" y1="176.8" x2="559.5" y2="185.3" stroke="#d7ddeb" stroke-width="0.8" />
<line x1="586" y1="176.8" x2="586" y2="185.3" stroke="#d7ddeb" stroke-width="0.8" />
<line x1="612.4" y1="176.8" x2="612.4" y2="185.3" stroke="#d7ddeb" stroke-width="0.8" />
<line x1="559.5" y1="185.3" x2="559.5" y2="192" stroke="#d7ddeb" stroke-width="0.8" />
<line x1="586" y1="185.3" x2="586" y2="192" stroke="#d7ddeb" stroke-width="0.8" />
<line x1="612.4" y1="185.3" x2="612.4" y2="192" stroke="#d7ddeb" stroke-width="0.8" />
<line x1="559.5" y1="192" x2="559.5" y2="212.2" stroke="#d7ddeb" stroke-width="0.8" />
<line x1="586" y1="192" x2="586" y2="212.2" stroke="#d7ddeb" stroke-width="0.8" />
<line x1="612.4" y1="192" x2="612.4" y2="212.2" stroke="#d7ddeb" stroke-width="0.8" />
<line x1="559.5" y1="212.2" x2="559.5" y2="218.5" stroke="#d7ddeb" stroke-width="0.8" />
<line x1="586" y1="212.2" x2="586" y2="218.5" stroke="#d7ddeb" stroke-width="0.8" />
<line x1="612.4" y1="212.2" x2="612.4" y2="218.5" stroke="#d7ddeb" stroke-width="0.8" />
<line x1="559.5" y1="218.5" x2="559.5" y2="227.3" stroke="#d7ddeb" stroke-width="0.8" />
<line x1="586" y1="218.5" x2="586" y2="227.3" stroke="#d7ddeb" stroke-width="0.8" />
<line x1="612.4" y1="218.5" x2="612.4" y2="227.3" stroke="#d7ddeb" stroke-width="0.8" />
<line x1="559.5" y1="227.3" x2="559.5" y2="240.2" stroke="#d7ddeb" stroke-width="0.8" />
<line x1="586" y1="227.3" x2="586" y2="240.2" stroke="#d7ddeb" stroke-width="0.8" />
<line x1="612.4" y1="227.3" x2="612.4" y2="240.2" stroke="#d7ddeb" stroke-width="0.8" />
<line x1="559.5" y1="240.2" x2="559.5" y2="253.1" stroke="#d7ddeb" stroke-width="0.8" />
<line x1="586" y1="240.2" x2="586" y2="253.1" stroke="#d7ddeb" stroke-width="0.8" />
<line x1="612.4" y1="240.2" x2="612.4" y2="253.1" stroke="#d7ddeb" stroke-width="0.8" />
<line x1="559.5" y1="253.1" x2="559.5" y2="266" stroke="#d7ddeb" stroke-width="0.8" />
<line x1="586" y1="253.1" x2="586" y2="266" stroke="#d7ddeb" stroke-width="0.8" />
<line x1="612.4" y1="253.1" x2="612.4" y2="266" stroke="#d7ddeb" stroke-width="0.8" />
<line x1="559.5" y1="266" x2="559.5" y2="278.9" stroke="#d7ddeb" stroke-width="0.8" />
<line x1="586" y1="266" x2="586" y2="278.9" stroke="#d7ddeb" stroke-width="0.8" />
<line x1="612.4" y1="266" x2="612.4" y2="278.9" stroke="#d7ddeb" stroke-width="0.8" />
<line x1="559.5" y1="278.9" x2="559.5" y2="291.7" stroke="#d7ddeb" stroke-width="0.8" />
<line x1="586" y1="278.9" x2="586" y2="291.7" stroke="#d7ddeb" stroke-width="0.8" />
<line x1="612.4" y1="278.9" x2="612.4" y2="291.7" stroke="#d7ddeb" stroke-width="0.8" />
<line x1="559.5" y1="291.7" x2="559.5" y2="304.5" stroke="#d7ddeb" stroke-width="0.8" />
<line x1="586" y1="291.7" x2="586" y2="304.5" stroke="#d7ddeb" stroke-width="0.8" />
<line x1="612.4" y1="291.7" x2="612.4" y2="304.5" stroke="#d7ddeb" stroke-width="0.8" />
<line x1="559.5" y1="304.5" x2="559.5" y2="317.3" stroke="#d7ddeb" stroke-width="0.8" />
<line x1="586" y1="304.5" x2="586" y2="317.3" stroke="#d7ddeb" stroke-width="0.8" />
<line x1="612.4" y1="304.5" x2="612.4" y2="317.3" stroke="#d7ddeb" stroke-width="0.8" />
<line x1="559.5" y1="317.3" x2="559.5" y2="330.3" stroke="#d7ddeb" stroke-width="0.8" />
<line x1="586" y1="317.3" x2="586" y2="330.3" stroke="#d7ddeb" stroke-width="0.8" />
<line x1="612.4" y1="317.3" x2="612.4" y2="330.3" stroke="#d7ddeb" stroke-width="0.8" />
<line x1="72.5" y1="330.3" x2="72.5" y2="338.8" stroke="#d7ddeb" stroke-width="0.8" />
<line x1="78.5" y1="330.3" x2="78.5" y2="338.8" stroke="#d7ddeb" stroke-width="0.8" />
<line x1="559.5" y1="330.3" x2="559.5" y2="338.8" stroke="#d7ddeb" stroke-width="0.8" />
<line x1="586" y1="330.3" x2="586" y2="338.8" stroke="#d7ddeb" stroke-width="0.8" />
<line x1="612.4" y1="330.3" x2="612.4" y2="338.8" stroke="#d7ddeb" stroke-width="0.8" />
<line x1="72.5" y1="338.8" x2="72.5" y2="347.5" stroke="#d7ddeb" stroke-width="0.8" />
<line x1="78.5" y1="338.8" x2="78.5" y2="347.5" stroke="#d7ddeb" stroke-width="0.8" />
<line x1="559.5" y1="338.8" x2="559.5" y2="347.5" stroke="#d7ddeb" stroke-width="0.8" />
<line x1="586" y1="338.8" x2="586" y2="347.5" stroke="#d7ddeb" stroke-width="0.8" />
<line x1="612.4" y1="338.8" x2="612.4" y2="347.5" stroke="#d7ddeb" stroke-width="0.8" />
<line x1="25.5" y1="347.5" x2="25.5" y2="356" stroke="#d7ddeb" stroke-width="0.8" />
<line x1="72.5" y1="347.5" x2="72.5" y2="356" stroke="#d7ddeb" stroke-width="0.8" />
<line x1="78.5" y1="347.5" x2="78.5" y2="356" stroke="#d7ddeb" stroke-width="0.8" />
<line x1="111.7" y1="347.5" x2="111.7" y2="356" stroke="#d7ddeb" stroke-width="0.8" />
<line x1="156.4" y1="347.5" x2="156.4" y2="356" stroke="#d7ddeb" stroke-width="0.8" />
<line x1="189.5" y1="347.5" x2="189.5" y2="356" stroke="#d7ddeb" stroke-width="0.8" />
<line x1="226.2" y1="347.5" x2="226.2" y2="356" stroke="#d7ddeb" stroke-width="0.8" />
<line x1="254.3" y1="347.5" x2="254.3" y2="356" stroke="#d7ddeb" stroke-width="0.8" />
<line x1="291.2" y1="347.5" x2="291.2" y2="356" stroke="#d7ddeb" stroke-width="0.8" />
<line x1="320.3" y1="347.5" x2="320.3" y2="356" stroke="#d7ddeb" stroke-width="0.8" />
<line x1="358.5" y1="347.5" x2="358.5" y2="356" stroke="#d7ddeb" stroke-width="0.8" />
<line x1="395.5" y1="347.5" x2="395.5" y2="356" stroke="#d7ddeb" stroke-width="0.8" />
<line x1="432.9" y1="347.5" x2="432.9" y2="356" stroke="#d7ddeb" stroke-width="0.8" />
<line x1="459.5" y1="347.5" x2="459.5" y2="356" stroke="#d7ddeb" stroke-width="0.8" />
<line x1="497.5" y1="347.5" x2="497.5" y2="356" stroke="#d7ddeb" stroke-width="0.8" />
<line x1="522.3" y1="347.5" x2="522.3" y2="356" stroke="#d7ddeb" stroke-width="0.8" />
<line x1="559.5" y1="347.5" x2="559.5" y2="356" stroke="#d7ddeb" stroke-width="0.8" />
<line x1="586" y1="347.5" x2="586" y2="356" stroke="#d7ddeb" stroke-width="0.8" />
<line x1="612.4" y1="347.5" x2="612.4" y2="356" stroke="#d7ddeb" stroke-width="0.8" />
<line x1="25.5" y1="356" x2="25.5" y2="364.3" stroke="#d7ddeb" stroke-width="0.8" />
<line x1="72.5" y1="356" x2="72.5" y2="364.3" stroke="#d7ddeb" stroke-width="0.8" />
<line x1="78.5" y1="356" x2="78.5" y2="364.3" stroke="#d7ddeb" stroke-width="0.8" />
<line x1="111.7" y1="356" x2="111.7" y2="364.3" stroke="#d7ddeb" stroke-width="0.8" />
<line x1="156.4" y1="356" x2="156.4" y2="364.3" stroke="#d7ddeb" stroke-width="0.8" />
<line x1="189.5" y1="356" x2="189.5" y2="364.3" stroke="#d7ddeb" stroke-width="0.8" />
<line x1="226.2" y1="356" x2="226.2" y2="364.3" stroke="#d7ddeb" stroke-width="0.8" />
<line x1="254.3" y1="356" x2="254.3" y2="364.3" stroke="#d7ddeb" stroke-width="0.8" />
<line x1="291.2" y1="356" x2="291.2" y2="364.3" stroke="#d7ddeb" stroke-width="0.8" />
<line x1="320.3" y1="356" x2="320.3" y2="364.3" stroke="#d7ddeb" stroke-width="0.8" />
<line x1="358.5" y1="356" x2="358.5" y2="364.3" stroke="#d7ddeb" stroke-width="0.8" />
<line x1="395.5" y1="356" x2="395.5" y2="364.3" stroke="#d7ddeb" stroke-width="0.8" />
<line x1="432.9" y1="356" x2="432.9" y2="364.3" stroke="#d7ddeb" stroke-width="0.8" />
<line x1="459.5" y1="356" x2="459.5" y2="364.3" stroke="#d7ddeb" stroke-width="0.8" />
<line x1="497.5" y1="356" x2="497.5" y2="364.3" stroke="#d7ddeb" stroke-width="0.8" />
<line x1="522.3" y1="356" x2="522.3" y2="364.3" stroke="#d7ddeb" stroke-width="0.8" />
<line x1="559.5" y1="356" x2="559.5" y2="364.3" stroke="#d7ddeb" stroke-width="0.8" />
<line x1="586" y1="356" x2="586" y2="364.3" stroke="#d7ddeb" stroke-width="0.8" />
<line x1="612.4" y1="356" x2="612.4" y2="364.3" stroke="#d7ddeb" stroke-width="0.8" />
<line x1="25.5" y1="364.3" x2="25.5" y2="372.5" stroke="#d7ddeb" stroke-width="0.8" />
<line x1="111.7" y1="364.3" x2="111.7" y2="372.5" stroke="#d7ddeb" stroke-width="0.8" />
<line x1="156.4" y1="364.3" x2="156.4" y2="372.5" stroke="#d7ddeb" stroke-width="0.8" />
<line x1="189.5" y1="364.3" x2="189.5" y2="372.5" stroke="#d7ddeb" stroke-width="0.8" />
<line x1="226.2" y1="364.3" x2="226.2" y2="372.5" stroke="#d7ddeb" stroke-width="0.8" />
<line x1="254.3" y1="364.3" x2="254.3" y2="372.5" stroke="#d7ddeb" stroke-width="0.8" />
<line x1="291.2" y1="364.3" x2="291.2" y2="372.5" stroke="#d7ddeb" stroke-width="0.8" />
<line x1="320.3" y1="364.3" x2="320.3" y2="372.5" stroke="#d7ddeb" stroke-width="0.8" />
<line x1="358.5" y1="364.3" x2="358.5" y2="372.5" stroke="#d7ddeb" stroke-width="0.8" />
<line x1="395.5" y1="364.3" x2="395.5" y2="372.5" stroke="#d7ddeb" stroke-width="0.8" />
<line x1="432.9" y1="364.3" x2="432.9" y2="372.5" stroke="#d7ddeb" stroke-width="0.8" />
<line x1="459.5" y1="364.3" x2="459.5" y2="372.5" stroke="#d7ddeb" stroke-width="0.8" />
<line x1="497.5" y1="364.3" x2="497.5" y2="372.5" stroke="#d7ddeb" stroke-width="0.8" />
<line x1="522.3" y1="364.3" x2="522.3" y2="372.5" stroke="#d7ddeb" stroke-width="0.8" />
<line x1="559.5" y1="364.3" x2="559.5" y2="372.5" stroke="#d7ddeb" stroke-width="0.8" />
<line x1="586" y1="364.3" x2="586" y2="372.5" stroke="#d7ddeb" stroke-width="0.8" />
<line x1="612.4" y1="364.3" x2="612.4" y2="372.5" stroke="#d7ddeb" stroke-width="0.8" />
<line x1="25.5" y1="372.5" x2="25.5" y2="380.5" stroke="#d7ddeb" stroke-width="0.8" />
<line x1="72.5" y1="372.5" x2="72.5" y2="380.5" stroke="#d7ddeb" stroke-width="0.8" />
<line x1="78.5" y1="372.5" x2="78.5" y2="380.5" stroke="#d7ddeb" stroke-width="0.8" />
<line x1="111.7" y1="372.5" x2="111.7" y2="380.5" stroke="#d7ddeb" stroke-width="0.8" />
<line x1="156.4" y1="372.5" x2="156.4" y2="380.5" stroke="#d7ddeb" stroke-width="0.8" />
<line x1="189.5" y1="372.5" x2="189.5" y2="380.5" stroke="#d7ddeb" stroke-width="0.8" />
<line x1="226.2" y1="372.5" x2="226.2" y2="380.5" stroke="#d7ddeb" stroke-width="0.8" />
<line x1="254.3" y1="372.5" x2="254.3" y2="380.5" stroke="#d7ddeb" stroke-width="0.8" />
<line x1="291.2" y1="372.5" x2="291.2" y2="380.5" stroke="#d7ddeb" stroke-width="0.8" />
<line x1="320.3" y1="372.5" x2="320.3" y2="380.5" stroke="#d7ddeb" stroke-width="0.8" />
<line x1="358.5" y1="372.5" x2="358.5" y2="380.5" stroke="#d7ddeb" stroke-width="0.8" />
<line x1="395.5" y1="372.5" x2="395.5" y2="380.5" stroke="#d7ddeb" stroke-width="0.8" />
<line x1="432.9" y1="372.5" x2="432.9" y2="380.5" stroke="#d7ddeb" stroke-width="0.8" />
<line x1="459.5" y1="372.5" x2="459.5" y2="380.5" stroke="#d7ddeb" stroke-width="0.8" />
<line x1="497.5" y1="372.5" x2="497.5" y2="380.5" stroke="#d7ddeb" stroke-width="0.8" />
<line x1="522.3" y1="372.5" x2="522.3" y2="380.5" stroke="#d7ddeb" stroke-width="0.8" />
<line x1="559.5" y1="372.5" x2="559.5" y2="380.5" stroke="#d7ddeb" stroke-width="0.8" />
<line x1="586" y1="372.5" x2="586" y2="380.5" stroke="#d7ddeb" stroke-width="0.8" />
<line x1="612.4" y1="372.5" x2="612.4" y2="380.5" stroke="#d7ddeb" stroke-width="0.8" />
<line x1="25.5" y1="380.5" x2="25.5" y2="388.2" stroke="#d7ddeb" stroke-width="0.8" />
<line x1="72.5" y1="380.5" x2="72.5" y2="388.2" stroke="#d7ddeb" stroke-width="0.8" />
<line x1="78.5" y1="380.5" x2="78.5" y2="388.2" stroke="#d7ddeb" stroke-width="0.8" />
<line x1="111.7" y1="380.5" x2="111.7" y2="388.2" stroke="#d7ddeb" stroke-width="0.8" />
<line x1="156.4" y1="380.5" x2="156.4" y2="388.2" stroke="#d7ddeb" stroke-width="0.8" />
<line x1="189.5" y1="380.5" x2="189.5" y2="388.2" stroke="#d7ddeb" stroke-width="0.8" />
<line x1="226.2" y1="380.5" x2="226.2" y2="388.2" stroke="#d7ddeb" stroke-width="0.8" />
<line x1="254.3" y1="380.5" x2="254.3" y2="388.2" stroke="#d7ddeb" stroke-width="0.8" />
<line x1="291.2" y1="380.5" x2="291.2" y2="388.2" stroke="#d7ddeb" stroke-width="0.8" />
<line x1="320.3" y1="380.5" x2="320.3" y2="388.2" stroke="#d7ddeb" stroke-width="0.8" />
<line x1="358.5" y1="380.5" x2="358.5" y2="388.2" stroke="#d7ddeb" stroke-width="0.8" />
<line x1="395.5" y1="380.5" x2="395.5" y2="388.2" stroke="#d7ddeb" stroke-width="0.8" />
<line x1="432.9" y1="380.5" x2="432.9" y2="388.2" stroke="#d7ddeb" stroke-width="0.8" />
<line x1="459.5" y1="380.5" x2="459.5" y2="388.2" stroke="#d7ddeb" stroke-width="0.8" />
<line x1="497.5" y1="380.5" x2="497.5" y2="388.2" stroke="#d7ddeb" stroke-width="0.8" />
<line x1="522.3" y1="380.5" x2="522.3" y2="388.2" stroke="#d7ddeb" stroke-width="0.8" />
<line x1="559.5" y1="380.5" x2="559.5" y2="388.2" stroke="#d7ddeb" stroke-width="0.8" />
<line x1="586" y1="380.5" x2="586" y2="388.2" stroke="#d7ddeb" stroke-width="0.8" />
<line x1="612.4" y1="380.5" x2="612.4" y2="388.2" stroke="#d7ddeb" stroke-width="0.8" />
<line x1="25.5" y1="388.2" x2="25.5" y2="399" stroke="#d7ddeb" stroke-width="0.8" />
<line x1="72.5" y1="388.2" x2="72.5" y2="399" stroke="#d7ddeb" stroke-width="0.8" />
<line x1="78.5" y1="388.2" x2="78.5" y2="399" stroke="#d7ddeb" stroke-width="0.8" />
<line x1="111.7" y1="388.2" x2="111.7" y2="399" stroke="#d7ddeb" stroke-width="0.8" />
<line x1="156.4" y1="388.2" x2="156.4" y2="399" stroke="#d7ddeb" stroke-width="0.8" />
<line x1="189.5" y1="388.2" x2="189.5" y2="399" stroke="#d7ddeb" stroke-width="0.8" />
<line x1="226.2" y1="388.2" x2="226.2" y2="399" stroke="#d7ddeb" stroke-width="0.8" />
<line x1="254.3" y1="388.2" x2="254.3" y2="399" stroke="#d7ddeb" stroke-width="0.8" />
<line x1="291.2" y1="388.2" x2="291.2" y2="399" stroke="#d7ddeb" stroke-width="0.8" />
<line x1="320.3" y1="388.2" x2="320.3" y2="399" stroke="#d7ddeb" stroke-width="0.8" />
<line x1="358.5" y1="388.2" x2="358.5" y2="399" stroke="#d7ddeb" stroke-width="0.8" />
<line x1="395.5" y1="388.2" x2="395.5" y2="399" stroke="#d7ddeb" stroke-width="0.8" />
<line x1="432.9" y1="388.2" x2="432.9" y2="399" stroke="#d7ddeb" stroke-width="0.8" />
<line x1="559.5" y1="388.2" x2="559.5" y2="399" stroke="#d7ddeb" stroke-width="0.8" />
<line x1="586" y1="388.2" x2="586" y2="399" stroke="#d7ddeb" stroke-width="0.8" />
<line x1="612.4" y1="388.2" x2="612.4" y2="399" stroke="#d7ddeb" stroke-width="0.8" />
<line x1="25.5" y1="399" x2="25.5" y2="402" stroke="#d7ddeb" stroke-width="0.8" />
<line x1="72.5" y1="399" x2="72.5" y2="402" stroke="#d7ddeb" stroke-width="0.8" />
<line x1="78.5" y1="399" x2="78.5" y2="402" stroke="#d7ddeb" stroke-width="0.8" />
<line x1="111.7" y1="399" x2="111.7" y2="402" stroke="#d7ddeb" stroke-width="0.8" />
<line x1="156.4" y1="399" x2="156.4" y2="402" stroke="#d7ddeb" stroke-width="0.8" />
<line x1="189.5" y1="399" x2="189.5" y2="402" stroke="#d7ddeb" stroke-width="0.8" />
<line x1="226.2" y1="399" x2="226.2" y2="402" stroke="#d7ddeb" stroke-width="0.8" />
<line x1="254.3" y1="399" x2="254.3" y2="402" stroke="#d7ddeb" stroke-width="0.8" />
<line x1="291.2" y1="399" x2="291.2" y2="402" stroke="#d7ddeb" stroke-width="0.8" />
<line x1="320.3" y1="399" x2="320.3" y2="402" stroke="#d7ddeb" stroke-width="0.8" />
<line x1="358.5" y1="399" x2="358.5" y2="402" stroke="#d7ddeb" stroke-width="0.8" />
<line x1="395.5" y1="399" x2="395.5" y2="402" stroke="#d7ddeb" stroke-width="0.8" />
<line x1="432.9" y1="399" x2="432.9" y2="402" stroke="#d7ddeb" stroke-width="0.8" />
<line x1="459.5" y1="399" x2="459.5" y2="402" stroke="#d7ddeb" stroke-width="0.8" />
<line x1="497.5" y1="399" x2="497.5" y2="402" stroke="#d7ddeb" stroke-width="0.8" />
<line x1="522.3" y1="399" x2="522.3" y2="402" stroke="#d7ddeb" stroke-width="0.8" />
<line x1="559.5" y1="399" x2="559.5" y2="402" stroke="#d7ddeb" stroke-width="0.8" />
<line x1="586" y1="399" x2="586" y2="402" stroke="#d7ddeb" stroke-width="0.8" />
<line x1="612.4" y1="399" x2="612.4" y2="402" stroke="#d7ddeb" stroke-width="0.8" />
<line x1="11.7" y1="117" x2="612.4" y2="117" stroke="#d7ddeb" stroke-width="0.8" />
<line x1="11.7" y1="126.5" x2="612.4" y2="126.5" stroke="#d7ddeb" stroke-width="0.8" />
<line x1="11.7" y1="135" x2="612.4" y2="135" stroke="#d7ddeb" stroke-width="0.8" />
<line x1="11.7" y1="143.5" x2="612.4" y2="143.5" stroke="#d7ddeb" stroke-width="0.8" />
<line x1="11.7" y1="151.5" x2="612.4" y2="151.5" stroke="#d7ddeb" stroke-width="0.8" />
<line x1="11.7" y1="159.8" x2="612.4" y2="159.8" stroke="#d7ddeb" stroke-width="0.8" />
<line x1="11.7" y1="168.2" x2="612.4" y2="168.2" stroke="#d7ddeb" stroke-width="0.8" />
<line x1="11.7" y1="176.8" x2="612.4" y2="176.8" stroke="#d7ddeb" stroke-width="0.8" />
<line x1="11.7" y1="185.3" x2="612.4" y2="185.3" stroke="#d7ddeb" stroke-width="0.8" />
<line x1="559.5" y1="192" x2="612.4" y2="192" stroke="#d7ddeb" stroke-width="0.8" />
<line x1="559.5" y1="212.2" x2="612.4" y2="212.2" stroke="#d7ddeb" stroke-width="0.8" />
<line x1="559.5" y1="218.5" x2="612.4" y2="218.5" stroke="#d7ddeb" stroke-width="0.8" />
<line x1="559.5" y1="227.3" x2="612.4" y2="227.3" stroke="#d7ddeb" stroke-width="0.8" />
<line x1="559.5" y1="240.2" x2="612.4" y2="240.2" stroke="#d7ddeb" stroke-width="0.8" />
<line x1="559.5" y1="253.1" x2="612.4" y2="253.1" stroke="#d7ddeb" stroke-width="0.8" />
<line x1="559.5" y1="266" x2="612.4" y2="266" stroke="#d7ddeb" stroke-width="0.8" />
<line x1="559.5" y1="278.9" x2="612.4" y2="278.9" stroke="#d7ddeb" stroke-width="0.8" />
<line x1="559.5" y1="291.7" x2="612.4" y2="291.7" stroke="#d7ddeb" stroke-width="0.8" />
<line x1="559.5" y1="304.5" x2="612.4" y2="304.5" stroke="#d7ddeb" stroke-width="0.8" />
<line x1="559.5" y1="317.3" x2="612.4" y2="317.3" stroke="#d7ddeb" stroke-width="0.8" />
<line x1="559.5" y1="330.3" x2="612.4" y2="330.3" stroke="#d7ddeb" stroke-width="0.8" />
<line x1="559.5" y1="338.8" x2="612.4" y2="338.8" stroke="#d7ddeb" stroke-width="0.8" />
<line x1="11.7" y1="347.5" x2="612.4" y2="347.5" stroke="#d7ddeb" stroke-width="0.8" />
<line x1="11.7" y1="356" x2="612.4" y2="356" stroke="#d7ddeb" stroke-width="0.8" />
<line x1="11.7" y1="364.3" x2="612.4" y2="364.3" stroke="#d7ddeb" stroke-width="0.8" />
<line x1="11.7" y1="372.5" x2="612.4" y2="372.5" stroke="#d7ddeb" stroke-width="0.8" />
<line x1="11.7" y1="380.5" x2="612.4" y2="380.5" stroke="#d7ddeb" stroke-width="0.8" />
<line x1="11.7" y1="388.2" x2="612.4" y2="388.2" stroke="#d7ddeb" stroke-width="0.8" />
<line x1="11.7" y1="399" x2="612.4" y2="399" stroke="#d7ddeb" stroke-width="0.8" />
<rect x="33.4" y="113.3" width="29.3" height="12.6" fill="url(#gData)" stroke="#214d8a" stroke-width="1" rx="2.6" />
<text x="48.1" y="121.5" font-size="4.9" fill="#ffffff" text-anchor="middle" font-weight="bold" textLength="12.8" lengthAdjust="spacingAndGlyphs">DATA</text>
<text x="185.5" y="114.9" font-size="6.9" fill="#111" font-weight="bold" textLength="200" lengthAdjust="spacingAndGlyphs">REALISASI PENGGUNAAN DANA TIAP JENIS ANGGARAN</text>
<text x="229" y="123.9" font-size="5.3" fill="#111" font-weight="bold" textLength="114" lengthAdjust="spacingAndGlyphs">TAHAP I: 1 Januari 2020 s.d. 30 April 2020</text>
<text x="257" y="132.7" font-size="4.8" fill="#111" font-weight="bold" textLength="58" lengthAdjust="spacingAndGlyphs">TAHUN AJARAN 2020</text>
<text x="13" y="149.6" font-size="5" fill="#222" textLength="34" lengthAdjust="spacingAndGlyphs" stroke="#222" stroke-width="0.06">Nama Sekolah</text>
<text x="75.3" y="149.6" font-size="5" fill="#222" text-anchor="middle" stroke="#222" stroke-width="0.06">:</text>
<text x="13" y="157.9" font-size="5" fill="#222" textLength="41" lengthAdjust="spacingAndGlyphs" stroke="#222" stroke-width="0.06">Desa/Kecamatan</text>
<text x="75.3" y="157.9" font-size="5" fill="#222" text-anchor="middle" stroke="#222" stroke-width="0.06">:</text>
<text x="13" y="166.3" font-size="5" fill="#222" textLength="38" lengthAdjust="spacingAndGlyphs" stroke="#222" stroke-width="0.06">Kabupaten/Kota</text>
<text x="75.3" y="166.3" font-size="5" fill="#222" text-anchor="middle" stroke="#222" stroke-width="0.06">:</text>
<text x="13" y="174.9" font-size="5" fill="#222" textLength="18.5" lengthAdjust="spacingAndGlyphs" stroke="#222" stroke-width="0.06">Provinsi</text>
<text x="75.3" y="174.9" font-size="5" fill="#222" text-anchor="middle" stroke="#222" stroke-width="0.06">:</text>
<rect x="432.9" y="151.5" width="126.6" height="25.3" fill="none" stroke="#111" stroke-width="0.9" />
<text x="519" y="157.9" font-size="4.9" fill="#222" text-anchor="end" textLength="42.5" lengthAdjust="spacingAndGlyphs" stroke="#222" stroke-width="0.06">Formulir BOS-K7a</text>
<text x="517.3" y="166.3" font-size="4.9" fill="#222" text-anchor="end" textLength="40" lengthAdjust="spacingAndGlyphs" stroke="#222" stroke-width="0.06">Diisi oleh Sekolah</text>
<text x="545.2" y="175.1" font-size="4.9" fill="#222" text-anchor="end" textLength="97" lengthAdjust="spacingAndGlyphs" stroke="#222" stroke-width="0.06">Dikirim ke Tim Manajemen BOS KabKota</text>
<line x1="11.7" y1="185.3" x2="559.8" y2="185.3" stroke="#111" stroke-width="1.3" />
<line x1="25.5" y1="185.3" x2="25.5" y2="347.5" stroke="#2e2e2e" stroke-width="1" />
<line x1="111.5" y1="185.3" x2="111.5" y2="347.5" stroke="#333" stroke-width="1" />
<line x1="522.5" y1="212.2" x2="522.5" y2="347.5" stroke="#333" stroke-width="1" />
<line x1="522.3" y1="185.3" x2="522.3" y2="212.2" stroke="#777" stroke-width="1.8" />
<line x1="559.5" y1="185.3" x2="559.5" y2="212.2" stroke="#222" stroke-width="0.9" />
<line x1="156.5" y1="192" x2="156.5" y2="347.5" stroke="#3a3a3a" stroke-width="1" />
<line x1="189.5" y1="192" x2="189.5" y2="347.5" stroke="#3a3a3a" stroke-width="1" />
<line x1="226.5" y1="192" x2="226.5" y2="347.5" stroke="#3a3a3a" stroke-width="1" />
<line x1="254.5" y1="192" x2="254.5" y2="347.5" stroke="#3a3a3a" stroke-width="1" />
<line x1="291.5" y1="192" x2="291.5" y2="347.5" stroke="#3a3a3a" stroke-width="1" />
<line x1="320.5" y1="192" x2="320.5" y2="347.5" stroke="#3a3a3a" stroke-width="1" />
<line x1="358.5" y1="192" x2="358.5" y2="347.5" stroke="#3a3a3a" stroke-width="1" />
<line x1="395.5" y1="192" x2="395.5" y2="347.5" stroke="#3a3a3a" stroke-width="1" />
<line x1="432.9" y1="192" x2="432.9" y2="347.5" stroke="#3a3a3a" stroke-width="1" />
<line x1="459.5" y1="192" x2="459.5" y2="347.5" stroke="#3a3a3a" stroke-width="1" />
<line x1="497.5" y1="192" x2="497.5" y2="347.5" stroke="#3a3a3a" stroke-width="1" />
<line x1="111.7" y1="192.3" x2="522.3" y2="192.3" stroke="#555" stroke-width="0.7" />
<line x1="11.7" y1="212.4" x2="522.3" y2="212.4" stroke="#777" stroke-width="0.7" />
<line x1="522.3" y1="211.4" x2="559.5" y2="211.4" stroke="#333" stroke-width="1.3" />
<line x1="11.7" y1="218.4" x2="559.5" y2="218.4" stroke="#2a2a2a" stroke-width="1" />
<line x1="11.7" y1="227.5" x2="559.5" y2="227.5" stroke="#c4c4c4" stroke-width="0.6" stroke-dasharray="2 0.8" />
<line x1="11.7" y1="240.4" x2="559.5" y2="240.4" stroke="#c4c4c4" stroke-width="0.6" stroke-dasharray="2 0.8" />
<line x1="11.7" y1="253.3" x2="559.5" y2="253.3" stroke="#c4c4c4" stroke-width="0.6" stroke-dasharray="2 0.8" />
<line x1="11.7" y1="266.2" x2="559.5" y2="266.2" stroke="#c4c4c4" stroke-width="0.6" stroke-dasharray="2 0.8" />
<line x1="11.7" y1="279.1" x2="559.5" y2="279.1" stroke="#c4c4c4" stroke-width="0.6" stroke-dasharray="2 0.8" />
<line x1="11.7" y1="291.9" x2="559.5" y2="291.9" stroke="#c4c4c4" stroke-width="0.6" stroke-dasharray="2 0.8" />
<line x1="11.7" y1="304.7" x2="559.5" y2="304.7" stroke="#c4c4c4" stroke-width="0.6" stroke-dasharray="2 0.8" />
<line x1="11.7" y1="317.5" x2="559.5" y2="317.5" stroke="#c4c4c4" stroke-width="0.6" stroke-dasharray="2 0.8" />
<line x1="11.7" y1="330.5" x2="559.5" y2="330.5" stroke="#c4c4c4" stroke-width="0.6" stroke-dasharray="2 0.8" />
<line x1="11.7" y1="338.8" x2="559.5" y2="338.8" stroke="#777" stroke-width="1.7" />
<line x1="11.7" y1="347.5" x2="559.5" y2="347.5" stroke="#111" stroke-width="1.2" />
<line x1="559.5" y1="106" x2="559.5" y2="400" stroke="#222" stroke-width="0.8" stroke-dasharray="1.3 1" />
<text x="295.5" y="190.7" font-size="4.3" fill="#222" textLength="43" lengthAdjust="spacingAndGlyphs">Penggunaan Dana BOS</text>
<text x="18.6" y="204.1" font-size="4.15" fill="#222" text-anchor="middle">No</text>
<text x="18.6" y="210.4" font-size="4.15" fill="#222" text-anchor="middle">Urut</text>
<text x="68.6" y="210.4" font-size="4.15" fill="#222" text-anchor="middle" textLength="34.5" lengthAdjust="spacingAndGlyphs">Program Kegiatan</text>
<text x="113" y="208.95" font-size="4.15" fill="#222" textLength="14.2" lengthAdjust="spacingAndGlyphs">1. PPDB</text>
<text x="157.5" y="196.45" font-size="4.15" fill="#222" textLength="3.2" lengthAdjust="spacingAndGlyphs">2.</text>
<text x="157.5" y="202.7" font-size="4.15" fill="#222" textLength="29" lengthAdjust="spacingAndGlyphs">Pengembangan</text>
<text x="157.5" y="208.95" font-size="4.15" fill="#222" textLength="26" lengthAdjust="spacingAndGlyphs">Perpustakaan</text>
<text x="190.6" y="196.45" font-size="4.15" fill="#222" textLength="31" lengthAdjust="spacingAndGlyphs">3. Pembelajaran</text>
<text x="190.6" y="202.7" font-size="4.15" fill="#222" textLength="7.3" lengthAdjust="spacingAndGlyphs">dan</text>
<text x="190.6" y="208.95" font-size="4.15" fill="#222" textLength="29.5" lengthAdjust="spacingAndGlyphs">Ekstrakurikuler</text>
<text x="227.8" y="208.95" font-size="4.15" fill="#222" textLength="21.7" lengthAdjust="spacingAndGlyphs">4. Asesmen</text>
<text x="255.5" y="202.7" font-size="4.15" fill="#222" textLength="28.3" lengthAdjust="spacingAndGlyphs">5. Administrasi</text>
<text x="255.5" y="208.95" font-size="4.15" fill="#222" textLength="15" lengthAdjust="spacingAndGlyphs">Sekolah</text>
<text x="292.5" y="196.45" font-size="4.15" fill="#222" textLength="3.2" lengthAdjust="spacingAndGlyphs">6.</text>
<text x="292.5" y="202.7" font-size="4.15" fill="#222" textLength="26.5" lengthAdjust="spacingAndGlyphs">Pengembanga</text>
<text x="292.5" y="208.95" font-size="4.15" fill="#222" textLength="11.5" lengthAdjust="spacingAndGlyphs">n GTK</text>
<text x="321.8" y="202.7" font-size="4.15" fill="#222" textLength="25" lengthAdjust="spacingAndGlyphs">7. Langganan</text>
<text x="321.8" y="208.95" font-size="4.15" fill="#222" textLength="27" lengthAdjust="spacingAndGlyphs">Daya dan Jasa</text>
<text x="359.1" y="202.7" font-size="4.15" fill="#222" textLength="31" lengthAdjust="spacingAndGlyphs">8. Pemeliharaan</text>
<text x="359.1" y="208.95" font-size="4.15" fill="#222" textLength="14.8" lengthAdjust="spacingAndGlyphs">Sarpras</text>
<text x="396.8" y="196.45" font-size="4.15" fill="#222" textLength="24.2" lengthAdjust="spacingAndGlyphs">9. Alat Multi</text>
<text x="396.8" y="202.7" font-size="4.15" fill="#222" textLength="11.2" lengthAdjust="spacingAndGlyphs">Media</text>
<text x="396.8" y="208.95" font-size="4.15" fill="#222" textLength="26.2" lengthAdjust="spacingAndGlyphs">Pembelajaran</text>
<text x="434" y="202.7" font-size="4.15" fill="#222" textLength="17" lengthAdjust="spacingAndGlyphs">10. Bursa</text>
<text x="434" y="208.95" font-size="4.15" fill="#222" textLength="24" lengthAdjust="spacingAndGlyphs">Kerja Khusus</text>
<text x="460.8" y="202.7" font-size="4.15" fill="#222" textLength="35.2" lengthAdjust="spacingAndGlyphs">11. Uji Kompetensi</text>
<text x="460.8" y="208.95" font-size="4.15" fill="#222" textLength="16" lengthAdjust="spacingAndGlyphs">Keahlian</text>
<text x="498.5" y="196.45" font-size="4.15" fill="#222" textLength="5.5" lengthAdjust="spacingAndGlyphs">12.</text>
<text x="498.5" y="202.7" font-size="4.15" fill="#222" textLength="21" lengthAdjust="spacingAndGlyphs">Pembayara</text>
<text x="498.5" y="208.95" font-size="4.15" fill="#222" textLength="14.3" lengthAdjust="spacingAndGlyphs">n Honor</text>
<text x="540.9" y="210.4" font-size="4.15" fill="#222" text-anchor="middle" textLength="13.5" lengthAdjust="spacingAndGlyphs">Jumlah</text>
<text x="18.6" y="216.9" font-size="4.15" fill="#222" text-anchor="middle">1</text>
<text x="68.6" y="216.9" font-size="4.15" fill="#222" text-anchor="middle">2</text>
<text x="134.05" y="216.9" font-size="4.15" fill="#222" text-anchor="middle">3</text>
<text x="172.95" y="216.9" font-size="4.15" fill="#222" text-anchor="middle">4</text>
<text x="207.85" y="216.9" font-size="4.15" fill="#222" text-anchor="middle">5</text>
<text x="240.25" y="216.9" font-size="4.15" fill="#222" text-anchor="middle">6</text>
<text x="272.75" y="216.9" font-size="4.15" fill="#222" text-anchor="middle">7</text>
<text x="305.75" y="216.9" font-size="4.15" fill="#222" text-anchor="middle">8</text>
<text x="339.4" y="216.9" font-size="4.15" fill="#222" text-anchor="middle">9</text>
<text x="377" y="216.9" font-size="4.15" fill="#222" text-anchor="middle">10</text>
<text x="414.2" y="216.9" font-size="4.15" fill="#222" text-anchor="middle">11</text>
<text x="446.2" y="216.9" font-size="4.15" fill="#222" text-anchor="middle">12</text>
<text x="478.5" y="216.9" font-size="4.15" fill="#222" text-anchor="middle">13</text>
<text x="509.9" y="216.9" font-size="4.15" fill="#222" text-anchor="middle">14</text>
<text x="540.9" y="216.9" font-size="4.15" fill="#222" text-anchor="middle">15</text>
<rect x="26.1" y="240.2" width="85" height="90.1" fill="#e7eaf5" />
<line x1="25.5" y1="240.4" x2="111.7" y2="240.4" stroke="#c4c4c4" stroke-width="0.6" stroke-dasharray="2 0.8" />
<line x1="25.5" y1="253.3" x2="111.7" y2="253.3" stroke="#c4c4c4" stroke-width="0.6" stroke-dasharray="2 0.8" />
<line x1="25.5" y1="266.2" x2="111.7" y2="266.2" stroke="#c4c4c4" stroke-width="0.6" stroke-dasharray="2 0.8" />
<line x1="25.5" y1="279.1" x2="111.7" y2="279.1" stroke="#c4c4c4" stroke-width="0.6" stroke-dasharray="2 0.8" />
<line x1="25.5" y1="291.9" x2="111.7" y2="291.9" stroke="#c4c4c4" stroke-width="0.6" stroke-dasharray="2 0.8" />
<line x1="25.5" y1="304.7" x2="111.7" y2="304.7" stroke="#c4c4c4" stroke-width="0.6" stroke-dasharray="2 0.8" />
<line x1="25.5" y1="317.5" x2="111.7" y2="317.5" stroke="#c4c4c4" stroke-width="0.6" stroke-dasharray="2 0.8" />
<line x1="25" y1="227.5" x2="112.2" y2="227.5" stroke="#333" stroke-width="1.3" />
<line x1="25" y1="330.5" x2="112.2" y2="330.5" stroke="#444" stroke-width="1.3" />
<line x1="25.5" y1="227.3" x2="25.5" y2="330.3" stroke="#8c8c8c" stroke-width="2" />
<line x1="111.8" y1="227.3" x2="111.8" y2="330.3" stroke="#8c8c8c" stroke-width="2" />
<rect x="110.6" y="329.3" width="2.4" height="2.4" fill="#111" stroke="#fff" stroke-width="0.5" />
<text x="18.8" y="233" font-size="4.15" fill="#2a2a2a" text-anchor="middle">1.1</text>
<text x="26.7" y="233" font-size="4.15" fill="#2a2a2a" textLength="68" lengthAdjust="spacingAndGlyphs">Pengembangan Kompetensi Lulusan</text>
<text x="18.8" y="245.9" font-size="4.15" fill="#2a2a2a" text-anchor="middle">1.2.</text>
<text x="26.7" y="245.9" font-size="4.15" fill="#2a2a2a" textLength="51" lengthAdjust="spacingAndGlyphs">Pengembangan standar isi</text>
<text x="18.8" y="258.8" font-size="4.15" fill="#2a2a2a" text-anchor="middle">1.3.</text>
<text x="26.7" y="258.8" font-size="4.15" fill="#2a2a2a" textLength="59" lengthAdjust="spacingAndGlyphs">Pengembangan standar proses</text>
<text x="18.8" y="271.2" font-size="4.15" fill="#2a2a2a" text-anchor="middle">1.4.</text>
<text x="26.7" y="271.2" font-size="4.15" fill="#2a2a2a" textLength="70" lengthAdjust="spacingAndGlyphs">Pengembangan pendidik dan tenaga</text>
<text x="26.7" y="277.25" font-size="4.15" fill="#2a2a2a" textLength="27" lengthAdjust="spacingAndGlyphs">kependidikan</text>
<text x="18.8" y="284.1" font-size="4.15" fill="#2a2a2a" text-anchor="middle">1.5.</text>
<text x="26.7" y="284.1" font-size="4.15" fill="#2a2a2a" textLength="72" lengthAdjust="spacingAndGlyphs">Pengembangan sarana dan prasarana</text>
<text x="26.7" y="290.15" font-size="4.15" fill="#2a2a2a" textLength="14.5" lengthAdjust="spacingAndGlyphs">sekolah</text>
<text x="18.8" y="297.4" font-size="4.15" fill="#2a2a2a" text-anchor="middle">1.6.</text>
<text x="26.7" y="297.4" font-size="4.15" fill="#2a2a2a" textLength="70" lengthAdjust="spacingAndGlyphs">Pengembangan standar pengelolaan</text>
<text x="18.8" y="310.2" font-size="4.15" fill="#2a2a2a" text-anchor="middle">1.7.</text>
<text x="26.7" y="310.2" font-size="4.15" fill="#2a2a2a" textLength="70" lengthAdjust="spacingAndGlyphs">Pengembangan standar pembiayaan</text>
<text x="18.8" y="323" font-size="4.15" fill="#2a2a2a" text-anchor="middle">1.8.</text>
<text x="26.7" y="323" font-size="4.15" fill="#2a2a2a" textLength="78.5" lengthAdjust="spacingAndGlyphs">Pengembangan dan implementasi sistem</text>
<text x="26.7" y="329.05" font-size="4.15" fill="#2a2a2a" textLength="18.5" lengthAdjust="spacingAndGlyphs">penilaian</text>
<path d="M112 227.7 h3.1 l-3.1 3.1 z" fill="#176b17"/>
<path d="M156.7 227.7 h3.1 l-3.1 3.1 z" fill="#176b17"/>
<path d="M189.8 227.7 h3.1 l-3.1 3.1 z" fill="#176b17"/>
<path d="M226.5 227.7 h3.1 l-3.1 3.1 z" fill="#176b17"/>
<path d="M254.6 227.7 h3.1 l-3.1 3.1 z" fill="#176b17"/>
<path d="M291.5 227.7 h3.1 l-3.1 3.1 z" fill="#176b17"/>
<path d="M320.6 227.7 h3.1 l-3.1 3.1 z" fill="#176b17"/>
<path d="M358.8 227.7 h3.1 l-3.1 3.1 z" fill="#176b17"/>
<path d="M395.8 227.7 h3.1 l-3.1 3.1 z" fill="#176b17"/>
<path d="M433.2 227.7 h3.1 l-3.1 3.1 z" fill="#176b17"/>
<path d="M459.8 227.7 h3.1 l-3.1 3.1 z" fill="#176b17"/>
<path d="M497.8 227.7 h3.1 l-3.1 3.1 z" fill="#176b17"/>
<path d="M522.6 227.7 h3.1 l-3.1 3.1 z" fill="#176b17"/>
<path d="M112 240.6 h3.1 l-3.1 3.1 z" fill="#176b17"/>
<path d="M156.7 240.6 h3.1 l-3.1 3.1 z" fill="#176b17"/>
<path d="M189.8 240.6 h3.1 l-3.1 3.1 z" fill="#176b17"/>
<path d="M226.5 240.6 h3.1 l-3.1 3.1 z" fill="#176b17"/>
<path d="M254.6 240.6 h3.1 l-3.1 3.1 z" fill="#176b17"/>
<path d="M291.5 240.6 h3.1 l-3.1 3.1 z" fill="#176b17"/>
<path d="M320.6 240.6 h3.1 l-3.1 3.1 z" fill="#176b17"/>
<path d="M358.8 240.6 h3.1 l-3.1 3.1 z" fill="#176b17"/>
<path d="M395.8 240.6 h3.1 l-3.1 3.1 z" fill="#176b17"/>
<path d="M433.2 240.6 h3.1 l-3.1 3.1 z" fill="#176b17"/>
<path d="M459.8 240.6 h3.1 l-3.1 3.1 z" fill="#176b17"/>
<path d="M497.8 240.6 h3.1 l-3.1 3.1 z" fill="#176b17"/>
<path d="M522.6 240.6 h3.1 l-3.1 3.1 z" fill="#176b17"/>
<path d="M112 253.5 h3.1 l-3.1 3.1 z" fill="#176b17"/>
<path d="M156.7 253.5 h3.1 l-3.1 3.1 z" fill="#176b17"/>
<path d="M189.8 253.5 h3.1 l-3.1 3.1 z" fill="#176b17"/>
<path d="M226.5 253.5 h3.1 l-3.1 3.1 z" fill="#176b17"/>
<path d="M254.6 253.5 h3.1 l-3.1 3.1 z" fill="#176b17"/>
<path d="M291.5 253.5 h3.1 l-3.1 3.1 z" fill="#176b17"/>
<path d="M320.6 253.5 h3.1 l-3.1 3.1 z" fill="#176b17"/>
<path d="M358.8 253.5 h3.1 l-3.1 3.1 z" fill="#176b17"/>
<path d="M395.8 253.5 h3.1 l-3.1 3.1 z" fill="#176b17"/>
<path d="M433.2 253.5 h3.1 l-3.1 3.1 z" fill="#176b17"/>
<path d="M459.8 253.5 h3.1 l-3.1 3.1 z" fill="#176b17"/>
<path d="M497.8 253.5 h3.1 l-3.1 3.1 z" fill="#176b17"/>
<path d="M522.6 253.5 h3.1 l-3.1 3.1 z" fill="#176b17"/>
<path d="M112 266.4 h3.1 l-3.1 3.1 z" fill="#176b17"/>
<path d="M156.7 266.4 h3.1 l-3.1 3.1 z" fill="#176b17"/>
<path d="M189.8 266.4 h3.1 l-3.1 3.1 z" fill="#176b17"/>
<path d="M226.5 266.4 h3.1 l-3.1 3.1 z" fill="#176b17"/>
<path d="M254.6 266.4 h3.1 l-3.1 3.1 z" fill="#176b17"/>
<path d="M291.5 266.4 h3.1 l-3.1 3.1 z" fill="#176b17"/>
<path d="M320.6 266.4 h3.1 l-3.1 3.1 z" fill="#176b17"/>
<path d="M358.8 266.4 h3.1 l-3.1 3.1 z" fill="#176b17"/>
<path d="M395.8 266.4 h3.1 l-3.1 3.1 z" fill="#176b17"/>
<path d="M433.2 266.4 h3.1 l-3.1 3.1 z" fill="#176b17"/>
<path d="M459.8 266.4 h3.1 l-3.1 3.1 z" fill="#176b17"/>
<path d="M497.8 266.4 h3.1 l-3.1 3.1 z" fill="#176b17"/>
<path d="M522.6 266.4 h3.1 l-3.1 3.1 z" fill="#176b17"/>
<path d="M112 279.3 h3.1 l-3.1 3.1 z" fill="#176b17"/>
<path d="M156.7 279.3 h3.1 l-3.1 3.1 z" fill="#176b17"/>
<path d="M189.8 279.3 h3.1 l-3.1 3.1 z" fill="#176b17"/>
<path d="M226.5 279.3 h3.1 l-3.1 3.1 z" fill="#176b17"/>
<path d="M254.6 279.3 h3.1 l-3.1 3.1 z" fill="#176b17"/>
<path d="M291.5 279.3 h3.1 l-3.1 3.1 z" fill="#176b17"/>
<path d="M320.6 279.3 h3.1 l-3.1 3.1 z" fill="#176b17"/>
<path d="M358.8 279.3 h3.1 l-3.1 3.1 z" fill="#176b17"/>
<path d="M395.8 279.3 h3.1 l-3.1 3.1 z" fill="#176b17"/>
<path d="M433.2 279.3 h3.1 l-3.1 3.1 z" fill="#176b17"/>
<path d="M459.8 279.3 h3.1 l-3.1 3.1 z" fill="#176b17"/>
<path d="M497.8 279.3 h3.1 l-3.1 3.1 z" fill="#176b17"/>
<path d="M522.6 279.3 h3.1 l-3.1 3.1 z" fill="#176b17"/>
<path d="M112 292.1 h3.1 l-3.1 3.1 z" fill="#176b17"/>
<path d="M156.7 292.1 h3.1 l-3.1 3.1 z" fill="#176b17"/>
<path d="M189.8 292.1 h3.1 l-3.1 3.1 z" fill="#176b17"/>
<path d="M226.5 292.1 h3.1 l-3.1 3.1 z" fill="#176b17"/>
<path d="M254.6 292.1 h3.1 l-3.1 3.1 z" fill="#176b17"/>
<path d="M291.5 292.1 h3.1 l-3.1 3.1 z" fill="#176b17"/>
<path d="M320.6 292.1 h3.1 l-3.1 3.1 z" fill="#176b17"/>
<path d="M358.8 292.1 h3.1 l-3.1 3.1 z" fill="#176b17"/>
<path d="M395.8 292.1 h3.1 l-3.1 3.1 z" fill="#176b17"/>
<path d="M433.2 292.1 h3.1 l-3.1 3.1 z" fill="#176b17"/>
<path d="M459.8 292.1 h3.1 l-3.1 3.1 z" fill="#176b17"/>
<path d="M497.8 292.1 h3.1 l-3.1 3.1 z" fill="#176b17"/>
<path d="M522.6 292.1 h3.1 l-3.1 3.1 z" fill="#176b17"/>
<path d="M112 304.9 h3.1 l-3.1 3.1 z" fill="#176b17"/>
<path d="M156.7 304.9 h3.1 l-3.1 3.1 z" fill="#176b17"/>
<path d="M189.8 304.9 h3.1 l-3.1 3.1 z" fill="#176b17"/>
<path d="M226.5 304.9 h3.1 l-3.1 3.1 z" fill="#176b17"/>
<path d="M254.6 304.9 h3.1 l-3.1 3.1 z" fill="#176b17"/>
<path d="M291.5 304.9 h3.1 l-3.1 3.1 z" fill="#176b17"/>
<path d="M320.6 304.9 h3.1 l-3.1 3.1 z" fill="#176b17"/>
<path d="M358.8 304.9 h3.1 l-3.1 3.1 z" fill="#176b17"/>
<path d="M395.8 304.9 h3.1 l-3.1 3.1 z" fill="#176b17"/>
<path d="M433.2 304.9 h3.1 l-3.1 3.1 z" fill="#176b17"/>
<path d="M459.8 304.9 h3.1 l-3.1 3.1 z" fill="#176b17"/>
<path d="M497.8 304.9 h3.1 l-3.1 3.1 z" fill="#176b17"/>
<path d="M522.6 304.9 h3.1 l-3.1 3.1 z" fill="#176b17"/>
<path d="M112 317.7 h3.1 l-3.1 3.1 z" fill="#176b17"/>
<path d="M156.7 317.7 h3.1 l-3.1 3.1 z" fill="#176b17"/>
<path d="M189.8 317.7 h3.1 l-3.1 3.1 z" fill="#176b17"/>
<path d="M226.5 317.7 h3.1 l-3.1 3.1 z" fill="#176b17"/>
<path d="M254.6 317.7 h3.1 l-3.1 3.1 z" fill="#176b17"/>
<path d="M291.5 317.7 h3.1 l-3.1 3.1 z" fill="#176b17"/>
<path d="M320.6 317.7 h3.1 l-3.1 3.1 z" fill="#176b17"/>
<path d="M358.8 317.7 h3.1 l-3.1 3.1 z" fill="#176b17"/>
<path d="M395.8 317.7 h3.1 l-3.1 3.1 z" fill="#176b17"/>
<path d="M433.2 317.7 h3.1 l-3.1 3.1 z" fill="#176b17"/>
<path d="M459.8 317.7 h3.1 l-3.1 3.1 z" fill="#176b17"/>
<path d="M497.8 317.7 h3.1 l-3.1 3.1 z" fill="#176b17"/>
<path d="M522.6 317.7 h3.1 l-3.1 3.1 z" fill="#176b17"/>
<path d="M112 339.2 h3.1 l-3.1 3.1 z" fill="#176b17"/>
<path d="M189.8 339.2 h3.1 l-3.1 3.1 z" fill="#176b17"/>
<path d="M226.5 339.2 h3.1 l-3.1 3.1 z" fill="#176b17"/>
<path d="M254.6 339.2 h3.1 l-3.1 3.1 z" fill="#176b17"/>
<path d="M291.5 339.2 h3.1 l-3.1 3.1 z" fill="#176b17"/>
<path d="M320.6 339.2 h3.1 l-3.1 3.1 z" fill="#176b17"/>
<path d="M358.8 339.2 h3.1 l-3.1 3.1 z" fill="#176b17"/>
<path d="M395.8 339.2 h3.1 l-3.1 3.1 z" fill="#176b17"/>
<path d="M433.2 339.2 h3.1 l-3.1 3.1 z" fill="#176b17"/>
<path d="M459.8 339.2 h3.1 l-3.1 3.1 z" fill="#176b17"/>
<path d="M497.8 339.2 h3.1 l-3.1 3.1 z" fill="#176b17"/>
<path d="M522.6 339.2 h3.1 l-3.1 3.1 z" fill="#176b17"/>
<circle cx="153.4" cy="231.9" r="0.35" fill="#c9c7a0"/>
<circle cx="186.5" cy="231.9" r="0.35" fill="#c9c7a0"/>
<circle cx="223.2" cy="231.9" r="0.35" fill="#c9c7a0"/>
<circle cx="251.3" cy="231.9" r="0.35" fill="#c9c7a0"/>
<circle cx="288.2" cy="231.9" r="0.35" fill="#c9c7a0"/>
<circle cx="317.3" cy="231.9" r="0.35" fill="#c9c7a0"/>
<circle cx="355.5" cy="231.9" r="0.35" fill="#c9c7a0"/>
<circle cx="392.5" cy="231.9" r="0.35" fill="#c9c7a0"/>
<circle cx="429.9" cy="231.9" r="0.35" fill="#c9c7a0"/>
<circle cx="456.5" cy="231.9" r="0.35" fill="#c9c7a0"/>
<circle cx="494.5" cy="231.9" r="0.35" fill="#c9c7a0"/>
<circle cx="519.3" cy="231.9" r="0.35" fill="#c9c7a0"/>
<circle cx="556.5" cy="231.9" r="0.35" fill="#c9c7a0"/>
<circle cx="153.4" cy="244.8" r="0.35" fill="#c9c7a0"/>
<circle cx="186.5" cy="244.8" r="0.35" fill="#c9c7a0"/>
<circle cx="223.2" cy="244.8" r="0.35" fill="#c9c7a0"/>
<circle cx="251.3" cy="244.8" r="0.35" fill="#c9c7a0"/>
<circle cx="288.2" cy="244.8" r="0.35" fill="#c9c7a0"/>
<circle cx="317.3" cy="244.8" r="0.35" fill="#c9c7a0"/>
<circle cx="355.5" cy="244.8" r="0.35" fill="#c9c7a0"/>
<circle cx="392.5" cy="244.8" r="0.35" fill="#c9c7a0"/>
<circle cx="429.9" cy="244.8" r="0.35" fill="#c9c7a0"/>
<circle cx="456.5" cy="244.8" r="0.35" fill="#c9c7a0"/>
<circle cx="494.5" cy="244.8" r="0.35" fill="#c9c7a0"/>
<circle cx="519.3" cy="244.8" r="0.35" fill="#c9c7a0"/>
<circle cx="556.5" cy="244.8" r="0.35" fill="#c9c7a0"/>
<circle cx="153.4" cy="257.7" r="0.35" fill="#c9c7a0"/>
<circle cx="186.5" cy="257.7" r="0.35" fill="#c9c7a0"/>
<circle cx="223.2" cy="257.7" r="0.35" fill="#c9c7a0"/>
<circle cx="251.3" cy="257.7" r="0.35" fill="#c9c7a0"/>
<circle cx="288.2" cy="257.7" r="0.35" fill="#c9c7a0"/>
<circle cx="317.3" cy="257.7" r="0.35" fill="#c9c7a0"/>
<circle cx="355.5" cy="257.7" r="0.35" fill="#c9c7a0"/>
<circle cx="392.5" cy="257.7" r="0.35" fill="#c9c7a0"/>
<circle cx="429.9" cy="257.7" r="0.35" fill="#c9c7a0"/>
<circle cx="456.5" cy="257.7" r="0.35" fill="#c9c7a0"/>
<circle cx="494.5" cy="257.7" r="0.35" fill="#c9c7a0"/>
<circle cx="519.3" cy="257.7" r="0.35" fill="#c9c7a0"/>
<circle cx="556.5" cy="257.7" r="0.35" fill="#c9c7a0"/>
<circle cx="153.4" cy="270.6" r="0.35" fill="#c9c7a0"/>
<circle cx="186.5" cy="270.6" r="0.35" fill="#c9c7a0"/>
<circle cx="223.2" cy="270.6" r="0.35" fill="#c9c7a0"/>
<circle cx="251.3" cy="270.6" r="0.35" fill="#c9c7a0"/>
<circle cx="288.2" cy="270.6" r="0.35" fill="#c9c7a0"/>
<circle cx="317.3" cy="270.6" r="0.35" fill="#c9c7a0"/>
<circle cx="355.5" cy="270.6" r="0.35" fill="#c9c7a0"/>
<circle cx="392.5" cy="270.6" r="0.35" fill="#c9c7a0"/>
<circle cx="429.9" cy="270.6" r="0.35" fill="#c9c7a0"/>
<circle cx="456.5" cy="270.6" r="0.35" fill="#c9c7a0"/>
<circle cx="494.5" cy="270.6" r="0.35" fill="#c9c7a0"/>
<circle cx="519.3" cy="270.6" r="0.35" fill="#c9c7a0"/>
<circle cx="556.5" cy="270.6" r="0.35" fill="#c9c7a0"/>
<circle cx="153.4" cy="283.5" r="0.35" fill="#c9c7a0"/>
<circle cx="186.5" cy="283.5" r="0.35" fill="#c9c7a0"/>
<circle cx="223.2" cy="283.5" r="0.35" fill="#c9c7a0"/>
<circle cx="251.3" cy="283.5" r="0.35" fill="#c9c7a0"/>
<circle cx="288.2" cy="283.5" r="0.35" fill="#c9c7a0"/>
<circle cx="317.3" cy="283.5" r="0.35" fill="#c9c7a0"/>
<circle cx="355.5" cy="283.5" r="0.35" fill="#c9c7a0"/>
<circle cx="392.5" cy="283.5" r="0.35" fill="#c9c7a0"/>
<circle cx="429.9" cy="283.5" r="0.35" fill="#c9c7a0"/>
<circle cx="456.5" cy="283.5" r="0.35" fill="#c9c7a0"/>
<circle cx="494.5" cy="283.5" r="0.35" fill="#c9c7a0"/>
<circle cx="519.3" cy="283.5" r="0.35" fill="#c9c7a0"/>
<circle cx="556.5" cy="283.5" r="0.35" fill="#c9c7a0"/>
<circle cx="153.4" cy="296.3" r="0.35" fill="#c9c7a0"/>
<circle cx="186.5" cy="296.3" r="0.35" fill="#c9c7a0"/>
<circle cx="223.2" cy="296.3" r="0.35" fill="#c9c7a0"/>
<circle cx="251.3" cy="296.3" r="0.35" fill="#c9c7a0"/>
<circle cx="288.2" cy="296.3" r="0.35" fill="#c9c7a0"/>
<circle cx="317.3" cy="296.3" r="0.35" fill="#c9c7a0"/>
<circle cx="355.5" cy="296.3" r="0.35" fill="#c9c7a0"/>
<circle cx="392.5" cy="296.3" r="0.35" fill="#c9c7a0"/>
<circle cx="429.9" cy="296.3" r="0.35" fill="#c9c7a0"/>
<circle cx="456.5" cy="296.3" r="0.35" fill="#c9c7a0"/>
<circle cx="494.5" cy="296.3" r="0.35" fill="#c9c7a0"/>
<circle cx="519.3" cy="296.3" r="0.35" fill="#c9c7a0"/>
<circle cx="556.5" cy="296.3" r="0.35" fill="#c9c7a0"/>
<circle cx="153.4" cy="309.1" r="0.35" fill="#c9c7a0"/>
<circle cx="186.5" cy="309.1" r="0.35" fill="#c9c7a0"/>
<circle cx="223.2" cy="309.1" r="0.35" fill="#c9c7a0"/>
<circle cx="251.3" cy="309.1" r="0.35" fill="#c9c7a0"/>
<circle cx="288.2" cy="309.1" r="0.35" fill="#c9c7a0"/>
<circle cx="317.3" cy="309.1" r="0.35" fill="#c9c7a0"/>
<circle cx="355.5" cy="309.1" r="0.35" fill="#c9c7a0"/>
<circle cx="392.5" cy="309.1" r="0.35" fill="#c9c7a0"/>
<circle cx="429.9" cy="309.1" r="0.35" fill="#c9c7a0"/>
<circle cx="456.5" cy="309.1" r="0.35" fill="#c9c7a0"/>
<circle cx="494.5" cy="309.1" r="0.35" fill="#c9c7a0"/>
<circle cx="519.3" cy="309.1" r="0.35" fill="#c9c7a0"/>
<circle cx="556.5" cy="309.1" r="0.35" fill="#c9c7a0"/>
<circle cx="153.4" cy="321.9" r="0.35" fill="#c9c7a0"/>
<circle cx="186.5" cy="321.9" r="0.35" fill="#c9c7a0"/>
<circle cx="223.2" cy="321.9" r="0.35" fill="#c9c7a0"/>
<circle cx="251.3" cy="321.9" r="0.35" fill="#c9c7a0"/>
<circle cx="288.2" cy="321.9" r="0.35" fill="#c9c7a0"/>
<circle cx="317.3" cy="321.9" r="0.35" fill="#c9c7a0"/>
<circle cx="355.5" cy="321.9" r="0.35" fill="#c9c7a0"/>
<circle cx="392.5" cy="321.9" r="0.35" fill="#c9c7a0"/>
<circle cx="429.9" cy="321.9" r="0.35" fill="#c9c7a0"/>
<circle cx="456.5" cy="321.9" r="0.35" fill="#c9c7a0"/>
<circle cx="494.5" cy="321.9" r="0.35" fill="#c9c7a0"/>
<circle cx="519.3" cy="321.9" r="0.35" fill="#c9c7a0"/>
<circle cx="556.5" cy="321.9" r="0.35" fill="#c9c7a0"/>
<text x="224.8" y="233" font-size="4.2" fill="#2a2a2a" text-anchor="end" textLength="18.8" lengthAdjust="spacingAndGlyphs">4.889.300</text>
<text x="224.8" y="245.9" font-size="4.2" fill="#2a2a2a" text-anchor="end" textLength="18.8" lengthAdjust="spacingAndGlyphs">1.144.000</text>
<text x="224.8" y="258.8" font-size="4.2" fill="#2a2a2a" text-anchor="end" textLength="14.8" lengthAdjust="spacingAndGlyphs">344.000</text>
<text x="558" y="233" font-size="4.2" fill="#2a2a2a" text-anchor="end" textLength="18.8" lengthAdjust="spacingAndGlyphs">4.889.300</text>
<text x="558" y="245.9" font-size="4.2" fill="#2a2a2a" text-anchor="end" textLength="18.8" lengthAdjust="spacingAndGlyphs">1.144.000</text>
<text x="558" y="258.8" font-size="4.2" fill="#2a2a2a" text-anchor="end" textLength="14.8" lengthAdjust="spacingAndGlyphs">344.000</text>
<text x="393.75" y="284.6" font-size="4.2" fill="#2a2a2a" text-anchor="end" textLength="14.8" lengthAdjust="spacingAndGlyphs">386.500</text>
<text x="558" y="284.6" font-size="4.2" fill="#2a2a2a" text-anchor="end" textLength="14.8" lengthAdjust="spacingAndGlyphs">386.500</text>
<text x="224.8" y="310.2" font-size="4.2" fill="#2a2a2a" text-anchor="end" textLength="14.8" lengthAdjust="spacingAndGlyphs">795.000</text>
<text x="289.5" y="310.2" font-size="4.2" fill="#2a2a2a" text-anchor="end" textLength="18.8" lengthAdjust="spacingAndGlyphs">2.360.800</text>
<text x="355.8" y="310.2" font-size="4.2" fill="#2a2a2a" text-anchor="end" textLength="14.8" lengthAdjust="spacingAndGlyphs">921.456</text>
<text x="520" y="310.2" font-size="4.2" fill="#2a2a2a" text-anchor="end" textLength="18.8" lengthAdjust="spacingAndGlyphs">1.100.000</text>
<text x="558" y="310.2" font-size="4.2" fill="#2a2a2a" text-anchor="end" textLength="18.8" lengthAdjust="spacingAndGlyphs">5.177.256</text>
<text x="252" y="323" font-size="4.2" fill="#2a2a2a" text-anchor="end" textLength="18.8" lengthAdjust="spacingAndGlyphs">4.536.000</text>
<text x="289.5" y="323" font-size="4.2" fill="#2a2a2a" text-anchor="end" textLength="14.8" lengthAdjust="spacingAndGlyphs">591.200</text>
<text x="558" y="323" font-size="4.2" fill="#2a2a2a" text-anchor="end" textLength="18.8" lengthAdjust="spacingAndGlyphs">5.127.200</text>
<text x="224.8" y="344.2" font-size="4.2" fill="#2a2a2a" text-anchor="end" textLength="24.3" lengthAdjust="spacingAndGlyphs">7.172.300,00</text>
<text x="253.1" y="344.5" font-size="4.2" fill="#222" text-anchor="end" font-weight="bold" textLength="23.5" lengthAdjust="spacingAndGlyphs">##########</text>
<text x="289.5" y="344.2" font-size="4.2" fill="#2a2a2a" text-anchor="end" textLength="24.3" lengthAdjust="spacingAndGlyphs">3.152.000,00</text>
<text x="355.8" y="344.2" font-size="4.2" fill="#2a2a2a" text-anchor="end" textLength="20.5" lengthAdjust="spacingAndGlyphs">921.456,00</text>
<text x="393.75" y="344.2" font-size="4.2" fill="#2a2a2a" text-anchor="end" textLength="20.5" lengthAdjust="spacingAndGlyphs">386.500,00</text>
<text x="521.1" y="344.5" font-size="4.2" fill="#222" text-anchor="end" font-weight="bold" textLength="20.5" lengthAdjust="spacingAndGlyphs">#########</text>
<text x="558" y="344.2" font-size="4.2" fill="#2a2a2a" text-anchor="end" textLength="26.5" lengthAdjust="spacingAndGlyphs">17.268.256,00</text>
<text x="27" y="362.4" font-size="5" fill="#222" textLength="36.5" lengthAdjust="spacingAndGlyphs" stroke="#222" stroke-width="0.06">Saldo tahun lalu</text>
<text x="27" y="370.6" font-size="5" fill="#222" textLength="57.5" lengthAdjust="spacingAndGlyphs" stroke="#222" stroke-width="0.06">Total BOS Pusat tahun ini</text>
<text x="27" y="378.6" font-size="5" fill="#222" textLength="38" lengthAdjust="spacingAndGlyphs" stroke="#222" stroke-width="0.06">Saldo periode ini</text>
<text x="152" y="362.4" font-size="5" fill="#222" text-anchor="middle" stroke="#222" stroke-width="0.06">-</text>
<text x="152" y="378.6" font-size="5" fill="#222" text-anchor="middle" stroke="#222" stroke-width="0.06">-</text>
<text x="153.3" y="370.8" font-size="5.6" fill="#222" text-anchor="end" textLength="37.5" lengthAdjust="spacingAndGlyphs" stroke="#222" stroke-width="0.06">124.160.000,00</text>
<text x="27" y="397.1" font-size="5" fill="#222" textLength="27.5" lengthAdjust="spacingAndGlyphs" stroke="#222" stroke-width="0.06">Menyetujui,</text>
<text x="434" y="397.1" font-size="5" fill="#222" textLength="95" lengthAdjust="spacingAndGlyphs" stroke="#222" stroke-width="0.06">Bendahara/Penanggung Jawab Kegiatan</text>
<rect x="0" y="402" width="612.4" height="4" fill="#c5d6ee" />
<line x1="0" y1="402" x2="612.4" y2="402" stroke="#9db4d4" stroke-width="0.5" />
<rect x="94" y="401.8" width="58" height="4" fill="#ffffff" />
<line x1="94" y1="402" x2="94" y2="405" stroke="#8fa8cb" stroke-width="0.5" />
<line x1="152" y1="402" x2="152" y2="405" stroke="#8fa8cb" stroke-width="0.5" />
<line x1="192" y1="402" x2="192" y2="405" stroke="#8fa8cb" stroke-width="0.5" />
<rect x="212" y="402" width="277" height="4" fill="#6f94ca" />
<rect x="489" y="402" width="123.4" height="4" fill="#dfe7f3" />
<line x1="489" y1="402.2" x2="612.4" y2="402.2" stroke="#f7f9fc" stroke-width="0.8" />
<circle cx="197.5" cy="404.5" r="1.3" fill="#e9a04a"/>
</svg>
</body></html>
